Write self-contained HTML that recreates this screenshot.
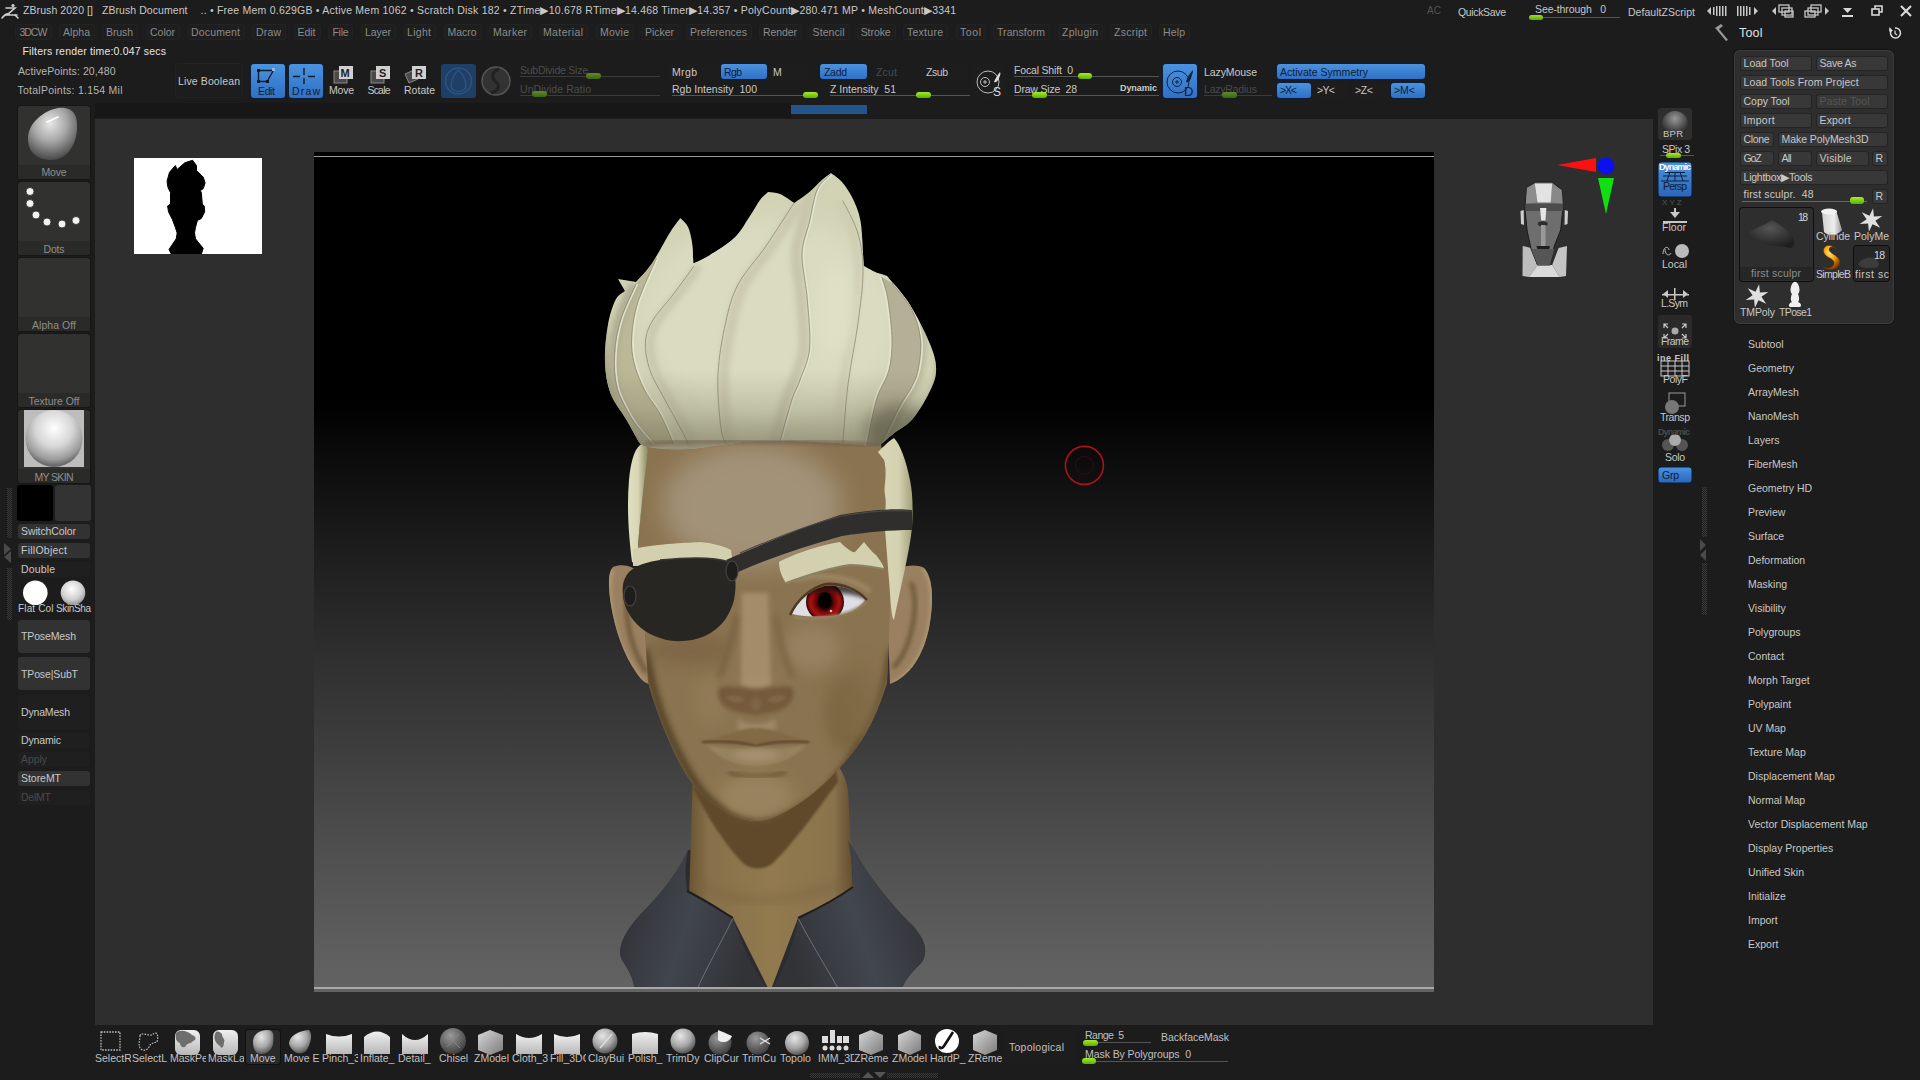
<!DOCTYPE html>
<html><head><meta charset="utf-8">
<style>
*{margin:0;padding:0;box-sizing:border-box}
html,body{width:1920px;height:1080px;overflow:hidden;background:#1c1c1c;font-family:"Liberation Sans",sans-serif;color:#c8c8c8;font-size:11px}
.a{position:absolute}
.t{position:absolute;white-space:nowrap;line-height:1}
</style></head><body>
<svg class="a" style="left:1px;top:2px" width="19" height="18" viewBox="0 0 19 18"><g fill="none" stroke="#d0d0d0" stroke-width="1.6" stroke-linecap="round"><circle cx="12" cy="3.5" r="1.6" fill="#d0d0d0" stroke="none"/><path d="M5 6 L14 6 L6 13 L16 13"/><path d="M1 16 Q5 11 8 12"/><path d="M14 13 L17 16"/></g></svg>
<div class="t" style="left:23px;top:4.91px;font-size:10.5px;color:#c8c8c8;letter-spacing:0.087px;">ZBrush 2020 []</div>
<div class="t" style="left:102px;top:4.91px;font-size:10.5px;color:#c8c8c8;letter-spacing:0.062px;">ZBrush Document</div>
<div class="t" style="left:200.5px;top:4.91px;font-size:10.5px;color:#c8c8c8;letter-spacing:0.222px;">.. • Free Mem 0.629GB • Active Mem 1062 • Scratch Disk 182 •  ZTime▶10.678 RTime▶14.468 Timer▶14.357 • PolyCount▶280.471 MP  • MeshCount▶3341</div>
<div class="t" style="left:1427px;top:5.54px;font-size:10px;color:#555;">AC</div>
<div class="t" style="left:1458px;top:6.61px;font-size:10.5px;color:#c8c8c8;letter-spacing:-0.348px;">QuickSave</div>
<div class="t" style="left:1535px;top:4.11px;font-size:10.5px;color:#c8c8c8;letter-spacing:-0.099px;">See-through&nbsp;&nbsp;&nbsp;0</div>
<div class="a" style="left:1540px;top:17px;width:80px;height:1px;background:#555;"></div>
<div class="a" style="left:1529px;top:15px;width:14px;height:5px;background:linear-gradient(#9be22a,#5aa800);border-radius:3px"></div>
<div class="t" style="left:1628px;top:6.61px;font-size:10.5px;color:#c8c8c8;letter-spacing:0.036px;">DefaultZScript</div>
<svg class="a" style="left:1705px;top:3px" width="215" height="16" viewBox="0 0 215 16"><g fill="#c8c8c8">
<path d="M2 8 L6 4 L6 12Z"/><rect x="8" y="4" width="1.5" height="8"/><rect x="11" y="3" width="1.5" height="10"/><rect x="14" y="3" width="1.5" height="10"/><rect x="17" y="3" width="1.5" height="10"/><rect x="20" y="3" width="1.5" height="10"/>
<rect x="32" y="3" width="1.5" height="10"/><rect x="35" y="3" width="1.5" height="10"/><rect x="38" y="3" width="1.5" height="10"/><rect x="41" y="3" width="1.5" height="10"/><rect x="44" y="4" width="1.5" height="8"/><path d="M53 8 L49 4 L49 12Z"/>
<path d="M67 8 L71 4 L71 12Z"/></g><g fill="none" stroke="#c8c8c8" stroke-width="1.3"><rect x="74" y="2" width="10" height="7"/><rect x="77" y="5" width="10" height="7"/><rect x="80" y="8" width="8" height="6"/>
<rect x="100" y="8" width="10" height="6"/><rect x="103" y="5" width="10" height="7"/><rect x="106" y="2" width="10" height="7"/></g><path d="M120 4 L124 8 L120 12Z" fill="#c8c8c8"/>
<g fill="#d8d8d8"><path d="M138 5 L147 5 L142.5 10Z"/><rect x="137" y="12" width="11" height="2"/></g>
<g fill="none" stroke="#d8d8d8" stroke-width="1.6"><rect x="167" y="6" width="7" height="6"/><path d="M170 6 V3 H177 V9 H174"/><path d="M196 3 L206 13 M206 3 L196 13" stroke-width="2.2"/></g>
</svg>
<div class="a" style="left:15px;top:24px;width:37px;height:16px;background:#1e1e1e;border-radius:3px;box-shadow:inset 0 0 0 1px #232323"></div>
<div class="t" style="left:19.4px;top:27.01px;font-size:10.5px;color:#8c8c8c;letter-spacing:-0.974px;">3DCW</div>
<div class="a" style="left:59px;top:24px;width:36px;height:16px;background:#1e1e1e;border-radius:3px;box-shadow:inset 0 0 0 1px #232323"></div>
<div class="t" style="left:63px;top:27.01px;font-size:10.5px;color:#8c8c8c;letter-spacing:0.035px;">Alpha</div>
<div class="a" style="left:102px;top:24px;width:36px;height:16px;background:#1e1e1e;border-radius:3px;box-shadow:inset 0 0 0 1px #232323"></div>
<div class="t" style="left:106px;top:27.01px;font-size:10.5px;color:#8c8c8c;letter-spacing:-0.109px;">Brush</div>
<div class="a" style="left:146px;top:24px;width:34px;height:16px;background:#1e1e1e;border-radius:3px;box-shadow:inset 0 0 0 1px #232323"></div>
<div class="t" style="left:150px;top:27.01px;font-size:10.5px;color:#8c8c8c;letter-spacing:-0.023px;">Color</div>
<div class="a" style="left:187px;top:24px;width:58px;height:16px;background:#1e1e1e;border-radius:3px;box-shadow:inset 0 0 0 1px #232323"></div>
<div class="t" style="left:191px;top:27.01px;font-size:10.5px;color:#8c8c8c;letter-spacing:0.163px;">Document</div>
<div class="a" style="left:252px;top:24px;width:34px;height:16px;background:#1e1e1e;border-radius:3px;box-shadow:inset 0 0 0 1px #232323"></div>
<div class="t" style="left:256px;top:27.01px;font-size:10.5px;color:#8c8c8c;letter-spacing:0.161px;">Draw</div>
<div class="a" style="left:294px;top:24px;width:27px;height:16px;background:#1e1e1e;border-radius:3px;box-shadow:inset 0 0 0 1px #232323"></div>
<div class="t" style="left:297.5px;top:27.01px;font-size:10.5px;color:#8c8c8c;letter-spacing:-0.031px;">Edit</div>
<div class="a" style="left:328px;top:24px;width:25px;height:16px;background:#1e1e1e;border-radius:3px;box-shadow:inset 0 0 0 1px #232323"></div>
<div class="t" style="left:332.5px;top:27.01px;font-size:10.5px;color:#8c8c8c;letter-spacing:-0.307px;">File</div>
<div class="a" style="left:361px;top:24px;width:35px;height:16px;background:#1e1e1e;border-radius:3px;box-shadow:inset 0 0 0 1px #232323"></div>
<div class="t" style="left:365px;top:27.01px;font-size:10.5px;color:#8c8c8c;letter-spacing:-0.066px;">Layer</div>
<div class="a" style="left:403px;top:24px;width:33px;height:16px;background:#1e1e1e;border-radius:3px;box-shadow:inset 0 0 0 1px #232323"></div>
<div class="t" style="left:407px;top:27.01px;font-size:10.5px;color:#8c8c8c;letter-spacing:0.305px;">Light</div>
<div class="a" style="left:444px;top:24px;width:38px;height:16px;background:#1e1e1e;border-radius:3px;box-shadow:inset 0 0 0 1px #232323"></div>
<div class="t" style="left:447.5px;top:27.01px;font-size:10.5px;color:#8c8c8c;letter-spacing:-0.047px;">Macro</div>
<div class="a" style="left:489px;top:24px;width:43px;height:16px;background:#1e1e1e;border-radius:3px;box-shadow:inset 0 0 0 1px #232323"></div>
<div class="t" style="left:493px;top:27.01px;font-size:10.5px;color:#8c8c8c;letter-spacing:0.266px;">Marker</div>
<div class="a" style="left:539px;top:24px;width:49px;height:16px;background:#1e1e1e;border-radius:3px;box-shadow:inset 0 0 0 1px #232323"></div>
<div class="t" style="left:543px;top:27.01px;font-size:10.5px;color:#8c8c8c;letter-spacing:0.377px;">Material</div>
<div class="a" style="left:596px;top:24px;width:38px;height:16px;background:#1e1e1e;border-radius:3px;box-shadow:inset 0 0 0 1px #232323"></div>
<div class="t" style="left:600px;top:27.01px;font-size:10.5px;color:#8c8c8c;letter-spacing:0.246px;">Movie</div>
<div class="a" style="left:641px;top:24px;width:38px;height:16px;background:#1e1e1e;border-radius:3px;box-shadow:inset 0 0 0 1px #232323"></div>
<div class="t" style="left:645px;top:27.01px;font-size:10.5px;color:#8c8c8c;letter-spacing:-0.037px;">Picker</div>
<div class="a" style="left:686px;top:24px;width:66px;height:16px;background:#1e1e1e;border-radius:3px;box-shadow:inset 0 0 0 1px #232323"></div>
<div class="t" style="left:690px;top:27.01px;font-size:10.5px;color:#8c8c8c;letter-spacing:0.037px;">Preferences</div>
<div class="a" style="left:759px;top:24px;width:43px;height:16px;background:#1e1e1e;border-radius:3px;box-shadow:inset 0 0 0 1px #232323"></div>
<div class="t" style="left:763px;top:27.01px;font-size:10.5px;color:#8c8c8c;letter-spacing:-0.091px;">Render</div>
<div class="a" style="left:809px;top:24px;width:41px;height:16px;background:#1e1e1e;border-radius:3px;box-shadow:inset 0 0 0 1px #232323"></div>
<div class="t" style="left:812.6px;top:27.01px;font-size:10.5px;color:#8c8c8c;letter-spacing:0.081px;">Stencil</div>
<div class="a" style="left:857px;top:24px;width:39px;height:16px;background:#1e1e1e;border-radius:3px;box-shadow:inset 0 0 0 1px #232323"></div>
<div class="t" style="left:860.7px;top:27.01px;font-size:10.5px;color:#8c8c8c;letter-spacing:-0.072px;">Stroke</div>
<div class="a" style="left:903px;top:24px;width:45px;height:16px;background:#1e1e1e;border-radius:3px;box-shadow:inset 0 0 0 1px #232323"></div>
<div class="t" style="left:907px;top:27.01px;font-size:10.5px;color:#8c8c8c;letter-spacing:0.260px;">Texture</div>
<div class="a" style="left:956px;top:24px;width:30px;height:16px;background:#1e1e1e;border-radius:3px;box-shadow:inset 0 0 0 1px #232323"></div>
<div class="t" style="left:960px;top:27.01px;font-size:10.5px;color:#8c8c8c;letter-spacing:0.578px;">Tool</div>
<div class="a" style="left:993px;top:24px;width:57px;height:16px;background:#1e1e1e;border-radius:3px;box-shadow:inset 0 0 0 1px #232323"></div>
<div class="t" style="left:997px;top:27.01px;font-size:10.5px;color:#8c8c8c;letter-spacing:0.068px;">Transform</div>
<div class="a" style="left:1058px;top:24px;width:45px;height:16px;background:#1e1e1e;border-radius:3px;box-shadow:inset 0 0 0 1px #232323"></div>
<div class="t" style="left:1062px;top:27.01px;font-size:10.5px;color:#8c8c8c;letter-spacing:0.258px;">Zplugin</div>
<div class="a" style="left:1110px;top:24px;width:42px;height:16px;background:#1e1e1e;border-radius:3px;box-shadow:inset 0 0 0 1px #232323"></div>
<div class="t" style="left:1114px;top:27.01px;font-size:10.5px;color:#8c8c8c;letter-spacing:0.250px;">Zscript</div>
<div class="a" style="left:1159px;top:24px;width:31px;height:16px;background:#1e1e1e;border-radius:3px;box-shadow:inset 0 0 0 1px #232323"></div>
<div class="t" style="left:1163px;top:27.01px;font-size:10.5px;color:#8c8c8c;letter-spacing:0.130px;">Help</div>
<div class="t" style="left:22.5px;top:46.11px;font-size:10.5px;color:#e6e6e6;letter-spacing:0.179px;">Filters render time:0.047 secs</div>
<div class="t" style="left:18px;top:66.11px;font-size:10.5px;color:#b4b4b4;letter-spacing:0.093px;">ActivePoints: 20,480</div>
<div class="t" style="left:17.5px;top:85.11px;font-size:10.5px;color:#b4b4b4;letter-spacing:0.247px;">TotalPoints: 1.154 Mil</div>
<div class="a" style="left:175px;top:63px;width:68px;height:35px;background:#1d1d1d;border-radius:4px;box-shadow:inset 0 0 0 1px #222"></div>
<div class="t" style="left:178px;top:76.11px;font-size:10.5px;color:#c8c8c8;letter-spacing:0.116px;">Live Boolean</div>
<div class="a" style="left:251px;top:64px;width:34px;height:34px;background:linear-gradient(#4a93e0,#2f70c4);border-radius:3px;box-shadow:0 0 0 1px #0b1d3a;"></div>
<div class="a" style="left:289px;top:64px;width:34px;height:34px;background:linear-gradient(#4a93e0,#2f70c4);border-radius:3px;box-shadow:0 0 0 1px #0b1d3a;"></div>
<svg class="a" style="left:251px;top:64px" width="72" height="34" viewBox="0 0 72 34"><g fill="#111a2a"><rect x="6" y="5" width="3" height="3"/><rect x="6" y="16" width="3" height="3"/><rect x="15" y="16" width="3" height="3"/><rect x="21" y="4" width="3" height="3" fill="#8cb8ea"/></g><g stroke="#111a2a" stroke-width="1.4" fill="none"><path d="M9 6.5 H21 M7.5 8 V16 M9 17.5 H15 M17 16 L22 7"/>
<path d="M53 4 V11 M53 14 V20 M42 12.5 H49 M57 12.5 H64"/></g></svg>
<div class="t" style="left:258px;top:86.11px;font-size:10.5px;color:#0f1c33;letter-spacing:-0.365px;">Edit</div>
<div class="t" style="left:292px;top:86.11px;font-size:10.5px;color:#0f1c33;letter-spacing:1.161px;">Draw</div>
<svg class="a" style="left:326px;top:65px" width="115" height="20" viewBox="0 0 115 20"><g>
<rect x="8" y="6" width="13" height="12" fill="#4a4a4a" stroke="#888" stroke-width="1"/><rect x="13" y="1" width="14" height="13" fill="#d0d0d0"/><text x="14.5" y="12" font-family="Liberation Sans" font-weight="bold" font-size="11" fill="#222">M</text>
<rect x="45" y="6" width="13" height="12" fill="#4a4a4a" stroke="#888" stroke-width="1"/><rect x="50" y="1" width="14" height="13" fill="#d0d0d0"/><text x="53" y="12" font-family="Liberation Sans" font-weight="bold" font-size="11" fill="#222">S</text>
<path d="M79 9 L88 5 L92 14 L83 18Z" fill="#4a4a4a" stroke="#888" stroke-width="1"/><rect x="86" y="1" width="14" height="13" fill="#d0d0d0"/><text x="89" y="12" font-family="Liberation Sans" font-weight="bold" font-size="11" fill="#222">R</text>
</g></svg>
<div class="t" style="left:329px;top:85.11px;font-size:10.5px;color:#c8c8c8;letter-spacing:-0.229px;">Move</div>
<div class="t" style="left:367.5px;top:85.11px;font-size:10.5px;color:#c8c8c8;letter-spacing:-0.816px;">Scale</div>
<div class="t" style="left:404px;top:85.11px;font-size:10.5px;color:#c8c8c8;letter-spacing:0.013px;">Rotate</div>
<div class="a" style="left:441px;top:64px;width:35px;height:34px;background:#1f3f66;border-radius:3px"></div>
<svg class="a" style="left:441px;top:64px" width="75" height="34" viewBox="0 0 75 34"><g fill="none" stroke="#2c5383" stroke-width="1.5"><circle cx="17.5" cy="17" r="13"/><path d="M17.5 6 C24 12 26 20 24 25 C20 28 15 28 11 25 C9 20 11 12 17.5 6Z"/></g>
<circle cx="55" cy="17" r="14" fill="#333" stroke="#555" stroke-width="1.5"/><path d="M58 5 C48 9 52 16 56 19 C60 23 55 28 50 29" fill="none" stroke="#222" stroke-width="3"/></svg>
<div class="t" style="left:520px;top:65.11px;font-size:10.5px;color:#4c4c4c;letter-spacing:-0.246px;">SubDivide Size</div>
<div class="a" style="left:520px;top:76px;width:140px;height:1px;background:#3a3a3a;"></div>
<div class="a" style="left:586px;top:73px;width:15px;height:6px;background:linear-gradient(#5f8c2a,#3d6412);border-radius:3px"></div>
<div class="t" style="left:520px;top:84.11px;font-size:10.5px;color:#4c4c4c;letter-spacing:0.075px;">UnDivide Ratio</div>
<div class="a" style="left:520px;top:95px;width:140px;height:1px;background:#3a3a3a;"></div>
<div class="a" style="left:532px;top:91px;width:15px;height:6px;background:linear-gradient(#5f8c2a,#3d6412);border-radius:3px"></div>
<div class="a" style="left:668px;top:64px;width:52px;height:16px;background:#1d1d1d;border-radius:3px"></div>
<div class="t" style="left:672px;top:66.61px;font-size:10.5px;color:#c8c8c8;letter-spacing:0.354px;">Mrgb</div>
<div class="a" style="left:721px;top:64px;width:46px;height:15px;background:linear-gradient(#4a93e0,#2f70c4);border-radius:3px;box-shadow:0 0 0 1px #0b1d3a;"></div>
<div class="t" style="left:724px;top:66.61px;font-size:10.5px;color:#0f1c33;letter-spacing:-0.633px;">Rgb</div>
<div class="a" style="left:769px;top:64px;width:41px;height:16px;background:#1d1d1d;border-radius:3px"></div>
<div class="t" style="left:773px;top:66.61px;font-size:10.5px;color:#c8c8c8;">M</div>
<div class="t" style="left:672px;top:84.11px;font-size:10.5px;color:#c8c8c8;letter-spacing:0.021px;">Rgb Intensity&nbsp;&nbsp;100</div>
<div class="a" style="left:672px;top:95px;width:146px;height:1px;background:#555;"></div>
<div class="a" style="left:803px;top:92px;width:15px;height:6px;background:linear-gradient(#a4ec2e,#5cae00);border-radius:3px"></div>
<div class="a" style="left:820px;top:64px;width:47px;height:15px;background:linear-gradient(#4a93e0,#2f70c4);border-radius:3px;box-shadow:0 0 0 1px #0b1d3a;"></div>
<div class="t" style="left:824px;top:66.61px;font-size:10.5px;color:#0f1c33;letter-spacing:-0.312px;">Zadd</div>
<div class="t" style="left:876px;top:66.61px;font-size:10.5px;color:#4a4a4a;letter-spacing:0.193px;">Zcut</div>
<div class="a" style="left:920px;top:64px;width:48px;height:16px;background:#1d1d1d;border-radius:3px"></div>
<div class="t" style="left:926px;top:66.61px;font-size:10.5px;color:#c8c8c8;letter-spacing:-0.448px;">Zsub</div>
<div class="t" style="left:830px;top:84.11px;font-size:10.5px;color:#c8c8c8;letter-spacing:0.003px;">Z Intensity&nbsp;&nbsp;51</div>
<div class="a" style="left:830px;top:95px;width:140px;height:1px;background:#555;"></div>
<div class="a" style="left:916px;top:92px;width:15px;height:6px;background:linear-gradient(#a4ec2e,#5cae00);border-radius:3px"></div>
<div class="a" style="left:973px;top:64px;width:33px;height:34px;background:#1d1d1d;border-radius:4px"></div>
<svg class="a" style="left:973px;top:64px" width="34" height="34" viewBox="0 0 34 34"><g fill="none" stroke="#bbb" stroke-width="1"><circle cx="15" cy="18" r="11"/><circle cx="12" cy="18" r="4.5"/><path d="M12 16 V20 M10 18 H14"/></g><path d="M27 8 C24 12 22 15 21 18 C23 19 25 17 26 14 C27 12 28 10 27 8Z" fill="#ddd"/><text x="20" y="32" font-family="Liberation Sans" font-size="12" fill="#ddd">S</text></svg>
<div class="t" style="left:1014px;top:65.11px;font-size:10.5px;color:#c8c8c8;letter-spacing:-0.175px;">Focal Shift&nbsp;&nbsp;0</div>
<div class="a" style="left:1014px;top:76px;width:145px;height:1px;background:#555;"></div>
<div class="a" style="left:1078px;top:73px;width:14px;height:6px;background:linear-gradient(#a4ec2e,#5cae00);border-radius:3px"></div>
<div class="t" style="left:1014px;top:84.11px;font-size:10.5px;color:#c8c8c8;letter-spacing:-0.197px;">Draw Size&nbsp;&nbsp;28</div>
<div class="a" style="left:1014px;top:95px;width:145px;height:1px;background:#555;"></div>
<div class="a" style="left:1032px;top:92px;width:15px;height:6px;background:linear-gradient(#a4ec2e,#5cae00);border-radius:3px"></div>
<div class="t" style="left:1120px;top:84.38px;font-size:9px;color:#c8c8c8;letter-spacing:-0.089px;font-weight:bold;">Dynamic</div>
<div class="a" style="left:1163px;top:64px;width:34px;height:34px;background:linear-gradient(#4a93e0,#2f70c4);border-radius:3px;box-shadow:0 0 0 1px #0b1d3a;"></div>
<svg class="a" style="left:1163px;top:64px" width="34" height="34" viewBox="0 0 34 34"><g fill="none" stroke="#102040" stroke-width="1"><circle cx="15" cy="18" r="11"/><circle cx="14" cy="18" r="4.5"/><path d="M14 16 V20 M12 18 H16"/></g><path d="M30 6 C26 10 24 14 23 18 C25 19 27 17 28 14 C29 11 30 9 30 6Z" fill="#102040"/><text x="21" y="32" font-family="Liberation Sans" font-size="13" fill="#102040">D</text></svg>
<div class="t" style="left:1204px;top:66.61px;font-size:10.5px;color:#c8c8c8;letter-spacing:-0.088px;">LazyMouse</div>
<div class="t" style="left:1204px;top:84.11px;font-size:10.5px;color:#4a4a4a;letter-spacing:-0.208px;">LazyRadius</div>
<div class="a" style="left:1204px;top:95px;width:68px;height:1px;background:#3a3a3a;"></div>
<div class="a" style="left:1222px;top:92px;width:15px;height:6px;background:linear-gradient(#5f8c2a,#3d6412);border-radius:3px"></div>
<div class="a" style="left:1277px;top:64px;width:148px;height:15px;background:linear-gradient(#4a93e0,#2f70c4);border-radius:3px;box-shadow:0 0 0 1px #0b1d3a;"></div>
<div class="t" style="left:1280px;top:66.61px;font-size:10.5px;color:#0f1c33;letter-spacing:0.029px;">Activate Symmetry</div>
<div class="a" style="left:1277px;top:83px;width:34px;height:15px;background:linear-gradient(#4a93e0,#2f70c4);border-radius:3px;box-shadow:0 0 0 1px #0b1d3a;"></div>
<div class="t" style="left:1280px;top:85.11px;font-size:10.5px;color:#0f1c33;letter-spacing:-1.141px;">&gt;X&lt;</div>
<div class="a" style="left:1315px;top:83px;width:34px;height:15px;background:#1d1d1d;border-radius:3px"></div>
<div class="t" style="left:1317px;top:85.11px;font-size:10.5px;color:#c8c8c8;letter-spacing:-0.641px;">&gt;Y&lt;</div>
<div class="a" style="left:1352px;top:83px;width:34px;height:15px;background:#1d1d1d;border-radius:3px"></div>
<div class="t" style="left:1355px;top:85.11px;font-size:10.5px;color:#c8c8c8;letter-spacing:-0.344px;">&gt;Z&lt;</div>
<div class="a" style="left:1391px;top:83px;width:34px;height:15px;background:linear-gradient(#4a93e0,#2f70c4);border-radius:3px;box-shadow:0 0 0 1px #0b1d3a;"></div>
<div class="t" style="left:1394px;top:85.11px;font-size:10.5px;color:#0f1c33;letter-spacing:-0.008px;">&gt;M&lt;</div>
<div class="a" style="left:95px;top:103px;width:696px;height:15px;background:#171717;"></div>
<div class="a" style="left:791px;top:105px;width:76px;height:9px;background:#24548c;"></div>
<div class="a" style="left:95px;top:119px;width:1558px;height:906px;background:#2e2e2e;"></div>
<div class="a" style="left:314px;top:152px;width:1120px;height:840px;background:linear-gradient(to bottom,#000 0px,#000 252px,#0a0a0a 298px,#1d1d1d 398px,#2e2e2e 498px,#3e3e3e 598px,#4f4f4f 698px,#5e5e5e 798px,#636363 840px);"></div>
<div class="a" style="left:314px;top:156px;width:1120px;height:1px;background:#9a9a9a;"></div>
<div class="a" style="left:314px;top:987px;width:1120px;height:2px;background:#a8a8a8;"></div>
<div class="a" style="left:18px;top:105.5px;width:72px;height:73px;background:#31312f;border-radius:3px;box-shadow:0 0 0 1px #161616"></div>
<div class="a" style="left:18px;top:164.5px;width:72px;height:14px;background:#2a2a29;border-radius:0 0 3px 3px"></div>
<div class="t" style="left:41.5px;top:167.11px;font-size:10.5px;color:#8e8e8e;letter-spacing:-0.229px;">Move</div>
<svg class="a" style="left:18px;top:105px" width="72" height="58" viewBox="0 0 72 58"><defs><radialGradient id="mvg" cx="0.45" cy="0.3" r="0.75"><stop offset="0" stop-color="#e8e8e8"/><stop offset="0.45" stop-color="#a8a8a8"/><stop offset="1" stop-color="#3c3c3c"/></radialGradient></defs>
<path d="M10 34 C10 18 25 6 40 3 C55 1 60 10 59 24 C58 42 48 55 33 55 C18 55 10 46 10 34Z" fill="url(#mvg)"/><path d="M29 17 L40 12" stroke="#fff" stroke-width="1.6" stroke-linecap="round"/></svg>
<div class="a" style="left:18px;top:182px;width:72px;height:73px;background:#31312f;border-radius:3px;box-shadow:0 0 0 1px #161616"></div>
<div class="a" style="left:18px;top:241px;width:72px;height:14px;background:#2a2a29;border-radius:0 0 3px 3px"></div>
<div class="t" style="left:43.5px;top:243.61px;font-size:10.5px;color:#8e8e8e;letter-spacing:-0.198px;">Dots</div>
<svg class="a" style="left:18px;top:182px" width="72" height="58" viewBox="0 0 72 58"><g fill="#f2f2f2" stroke="#222" stroke-width="0.8">
<circle cx="12" cy="9.5" r="4"/><circle cx="12" cy="21.5" r="4"/><circle cx="18" cy="33" r="4"/><circle cx="29" cy="40" r="4"/><circle cx="44" cy="42" r="4"/><circle cx="58" cy="38.5" r="4"/></g></svg>
<div class="a" style="left:18px;top:258px;width:72px;height:73px;background:#31312f;border-radius:3px;box-shadow:0 0 0 1px #161616"></div>
<div class="a" style="left:18px;top:317px;width:72px;height:14px;background:#2a2a29;border-radius:0 0 3px 3px"></div>
<div class="t" style="left:32.0px;top:319.61px;font-size:10.5px;color:#8e8e8e;letter-spacing:0.051px;">Alpha Off</div>
<div class="a" style="left:18px;top:334px;width:72px;height:73px;background:#31312f;border-radius:3px;box-shadow:0 0 0 1px #161616"></div>
<div class="a" style="left:18px;top:393px;width:72px;height:14px;background:#2a2a29;border-radius:0 0 3px 3px"></div>
<div class="t" style="left:28.5px;top:395.61px;font-size:10.5px;color:#8e8e8e;letter-spacing:-0.017px;">Texture Off</div>
<div class="a" style="left:18px;top:410px;width:72px;height:73px;background:#31312f;border-radius:3px;box-shadow:0 0 0 1px #161616"></div>
<div class="a" style="left:18px;top:469px;width:72px;height:14px;background:#2a2a29;border-radius:0 0 3px 3px"></div>
<div class="t" style="left:34.5px;top:471.61px;font-size:10.5px;color:#8e8e8e;letter-spacing:-0.664px;">MY SKIN</div>
<svg class="a" style="left:24px;top:410px" width="60" height="57" viewBox="0 0 60 57"><defs><radialGradient id="skg" cx="0.5" cy="0.32" r="0.65"><stop offset="0" stop-color="#ffffff"/><stop offset="0.5" stop-color="#d6d6d6"/><stop offset="0.85" stop-color="#9a9a9a"/><stop offset="1" stop-color="#6a6a6a"/></radialGradient></defs><rect width="60" height="57" fill="#bdbdbd"/><circle cx="30" cy="28.5" r="28.5" fill="url(#skg)"/></svg>
<div class="a" style="left:17px;top:485px;width:36px;height:36px;background:#000;border-radius:3px"></div>
<div class="a" style="left:55px;top:485px;width:36px;height:36px;background:#333;border-radius:3px"></div>
<div class="a" style="left:18px;top:524px;width:72px;height:15px;background:#323232;border-radius:3px"></div>
<div class="t" style="left:21px;top:526.11px;font-size:10.5px;color:#c8c8c8;letter-spacing:-0.103px;">SwitchColor</div>
<div class="a" style="left:18px;top:543px;width:72px;height:15px;background:#323232;border-radius:3px"></div>
<div class="t" style="left:21px;top:545.11px;font-size:10.5px;color:#c8c8c8;letter-spacing:0.248px;">FillObject</div>
<div class="a" style="left:18px;top:562px;width:72px;height:15px;background:#1f1f1f;border-radius:3px"></div>
<div class="t" style="left:21px;top:564.11px;font-size:10.5px;color:#c8c8c8;letter-spacing:0.144px;">Double</div>
<svg class="a" style="left:18px;top:578px" width="72" height="30" viewBox="0 0 72 30"><defs><radialGradient id="ss" cx="0.45" cy="0.35" r="0.7"><stop offset="0" stop-color="#fff"/><stop offset="0.6" stop-color="#d0d0d0"/><stop offset="1" stop-color="#8a8a8a"/></radialGradient></defs><circle cx="17.3" cy="14.8" r="12.3" fill="#fff"/><circle cx="55" cy="14.8" r="12.3" fill="url(#ss)"/></svg>
<div class="t" style="left:18px;top:603.83px;font-size:10px;color:#c8c8c8;letter-spacing:0.150px;">Flat Col</div>
<div class="t" style="left:56px;top:603.83px;font-size:10px;color:#c8c8c8;letter-spacing:-0.375px;">SkinSha</div>
<div class="a" style="left:18px;top:620px;width:72px;height:33px;background:#323232;border-radius:3px"></div>
<div class="t" style="left:21px;top:631.11px;font-size:10.5px;color:#c8c8c8;letter-spacing:-0.129px;">TPoseMesh</div>
<div class="a" style="left:18px;top:657px;width:72px;height:33px;background:#323232;border-radius:3px"></div>
<div class="t" style="left:21px;top:669.11px;font-size:10.5px;color:#c8c8c8;letter-spacing:-0.130px;">TPose|SubT</div>
<div class="a" style="left:18px;top:695px;width:72px;height:34px;background:#1f1f1f;border-radius:3px"></div>
<div class="t" style="left:21px;top:707.11px;font-size:10.5px;color:#c8c8c8;letter-spacing:-0.172px;">DynaMesh</div>
<div class="a" style="left:18px;top:733px;width:72px;height:15px;background:#1f1f1f;border-radius:3px"></div>
<div class="t" style="left:21px;top:735.11px;font-size:10.5px;color:#c8c8c8;letter-spacing:-0.141px;">Dynamic</div>
<div class="a" style="left:18px;top:752px;width:72px;height:15px;background:#1f1f1f;border-radius:3px"></div>
<div class="t" style="left:21px;top:754.11px;font-size:10.5px;color:#4a4a4a;letter-spacing:-0.066px;">Apply</div>
<div class="a" style="left:18px;top:771px;width:72px;height:15px;background:#323232;border-radius:3px"></div>
<div class="t" style="left:21px;top:773.11px;font-size:10.5px;color:#c8c8c8;letter-spacing:-0.044px;">StoreMT</div>
<div class="a" style="left:18px;top:790px;width:72px;height:15px;background:#1f1f1f;border-radius:3px"></div>
<div class="t" style="left:21px;top:792.11px;font-size:10.5px;color:#4a4a4a;letter-spacing:-0.230px;">DelMT</div>
<svg class="a" style="left:3px;top:486px" width="16" height="135" viewBox="0 0 16 135"><defs><pattern id="dp" width="2" height="2" patternUnits="userSpaceOnUse"><rect width="1" height="1" fill="#3a3a3a"/><rect x="1" y="1" width="1" height="1" fill="#3a3a3a"/></pattern></defs>
<rect x="4" y="2" width="5" height="50" fill="url(#dp)"/><rect x="4" y="82" width="5" height="52" fill="url(#dp)"/><path d="M1 57 L8 63 L1 69Z M8 65 L1 71 L8 77Z" fill="#4a4a4a"/></svg>
<div class="a" style="left:95px;top:119px;width:1px;height:906px;background:#2e2e2e;"></div>
<div class="a" style="left:134px;top:158px;width:128px;height:96px;background:#fff;"></div>
<svg class="a" style="left:134px;top:158px" width="128" height="96" viewBox="0 0 128 96"><path fill="#000" stroke="#000" stroke-width="1" stroke-linejoin="round" d="M33.6 27.8 L33.1 23.0 L35.5 14.3 L41.3 7.6 L43.2 11.4 L50.9 4.7 L58.6 2.3 L62.5 7.6 L62.5 12.4 L69.2 19.1 L71.1 24.9 L69.2 30.7 L66.3 32.6 L67.3 34.5 L68.3 46.1 L70.2 48.0 L70.7 53.8 L67.3 60.5 L63.4 62.5 L61.5 69.2 L60.5 75.0 L61.5 80.8 L69.2 90.4 L67.3 96.2 L37.4 96.2 L35.0 91.4 L42.2 80.8 L43.2 75.0 L41.3 69.2 L38.4 61.5 L34.5 53.8 L33.6 48.0 L36.5 46.1 L36.5 34.5 L34.5 30.7Z"/></svg>
<div class="a" style="left:1653px;top:119px;width:45px;height:906px;background:#1c1c1c;"></div>
<div class="a" style="left:1700px;top:119px;width:4px;height:906px;background:#1c1c1c;"></div>
<svg class="a" style="left:1655px;top:104px" width="42" height="385" viewBox="0 0 42 385"><defs>
<radialGradient id="bprg" cx="0.5" cy="0.3" r="0.6"><stop offset="0" stop-color="#999"/><stop offset="1" stop-color="#2a2a2a"/></radialGradient>
<linearGradient id="pbl" x1="0" y1="0" x2="0" y2="1"><stop offset="0" stop-color="#4a93e0"/><stop offset="1" stop-color="#2a66b8"/></linearGradient></defs>
<rect x="3" y="4" width="34" height="32" rx="3" fill="#2e2e2e"/><circle cx="20" cy="20" r="13" fill="url(#bprg)"/>
<rect x="3" y="58" width="34" height="35" rx="3" fill="url(#pbl)" stroke="#0b1d3a"/>
<g stroke="#0d1f3d" stroke-width="1" fill="none"><path d="M8 72 H32 M10 68.5 H30 M6 77 H34 M15 68 L12 77 M20 68 V77 M25 68 L28 77"/></g>
<rect x="3" y="211" width="34" height="33" rx="3" fill="#2a2a2a"/>
<g fill="#c8c8c8"><rect x="8" y="117" width="24" height="2"/><path d="M15 108 L25 108 L20 114Z"/><rect x="19" y="104" width="2" height="5"/></g>
<circle cx="27" cy="147" r="7" fill="#bbb"/><path d="M8 150 C8 142 14 142 14 146 M10 145 C10 152 15 152 16 149" stroke="#bbb" fill="none"/>
<g fill="#c8c8c8"><rect x="7" y="190" width="27" height="1.5"/><path d="M8 190 L13 186 L13 194Z M33 190 L28 186 L28 194Z"/><rect x="19" y="184" width="1.5" height="12"/></g>
<g stroke="#c8c8c8" stroke-width="1.2" fill="none"><path d="M9 220 L13 224 M9 224 V220 H13 M31 220 L27 224 M31 224 V220 H27 M9 234 L13 230 M9 230 V234 H13 M31 234 L27 230 M31 230 V234 H27"/></g><circle cx="20" cy="227" r="3.5" fill="#aaa"/>
<g stroke="#c8c8c8" stroke-width="1" fill="none"><rect x="6" y="257" width="28" height="15"/><path d="M6 262 H34 M6 267 H34 M13 257 V272 M20 257 V272 M27 257 V272"/></g>
<rect x="14" y="289" width="16" height="13" fill="none" stroke="#9a9a9a"/><circle cx="17" cy="303" r="7" fill="#777"/>
<circle cx="13" cy="341" r="6" fill="#555"/><circle cx="27" cy="341" r="6" fill="#555"/><circle cx="20" cy="336" r="6" fill="#aaa"/>
<rect x="3" y="363" width="34" height="16" rx="3" fill="url(#pbl)" stroke="#0b1d3a"/>
</svg>
<div class="t" style="left:1663px;top:128.96px;font-size:9.5px;color:#c8c8c8;letter-spacing:0.227px;">BPR</div>
<div class="t" style="left:1662px;top:143.51px;font-size:10.5px;color:#c8c8c8;letter-spacing:-0.472px;">SPix&nbsp;3</div>
<div class="a" style="left:1660px;top:155px;width:34px;height:1px;background:#555;"></div>
<div class="a" style="left:1666px;top:153px;width:15px;height:5px;background:linear-gradient(#a4ec2e,#5cae00);border-radius:3px"></div>
<div class="t" style="left:1659px;top:163.38px;font-size:9px;color:#fff;letter-spacing:-0.922px;font-weight:bold;">Dynamic</div>
<div class="t" style="left:1663px;top:181.11px;font-size:10.5px;color:#0f1c33;letter-spacing:-0.859px;">Persp</div>
<div class="t" style="left:1662px;top:199.23px;font-size:8px;color:#555;">X Y Z</div>
<div class="t" style="left:1662px;top:222.11px;font-size:10.5px;color:#c8c8c8;letter-spacing:0.016px;">Floor</div>
<div class="t" style="left:1662px;top:259.11px;font-size:10.5px;color:#c8c8c8;letter-spacing:-0.027px;">Local</div>
<div class="t" style="left:1661px;top:297.71px;font-size:10.5px;color:#c8c8c8;letter-spacing:-0.691px;">L.Sym</div>
<div class="t" style="left:1661px;top:336.11px;font-size:10.5px;color:#c8c8c8;letter-spacing:-0.586px;">Frame</div>
<div class="t" style="left:1657px;top:354.38px;font-size:9px;color:#c8c8c8;letter-spacing:0.498px;font-weight:bold;">ine Fill</div>
<div class="t" style="left:1663px;top:374.11px;font-size:10.5px;color:#c8c8c8;letter-spacing:-0.461px;">PolyF</div>
<div class="t" style="left:1660px;top:412.11px;font-size:10.5px;color:#c8c8c8;letter-spacing:-0.459px;">Transp</div>
<div class="t" style="left:1658px;top:428.38px;font-size:9px;color:#4a4a4a;letter-spacing:-0.922px;font-weight:bold;">Dynamic</div>
<div class="t" style="left:1665px;top:452.11px;font-size:10.5px;color:#c8c8c8;letter-spacing:-0.339px;">Solo</div>
<div class="t" style="left:1662px;top:469.61px;font-size:10.5px;color:#0f1c33;letter-spacing:-0.258px;">Grp</div>
<svg class="a" style="left:1700px;top:485px" width="8" height="130" viewBox="0 0 8 130"><rect x="2" y="2" width="5" height="50" fill="url(#dp)"/><rect x="2" y="78" width="5" height="52" fill="url(#dp)"/><path d="M0 54 L6 60 L0 66Z M6 64 L0 70 L6 76Z" fill="#4a4a4a"/></svg>
<svg class="a" style="left:1712px;top:22px" width="20" height="20" viewBox="0 0 20 20"><path d="M3 6 L9 2 L11 4 L7 7 L16 18 L14 19 L5 8 Z" fill="#999"/></svg>
<div class="t" style="left:1739px;top:27.42px;font-size:12.5px;color:#e0e0e0;letter-spacing:0.188px;">Tool</div>
<svg class="a" style="left:1888px;top:26px" width="14" height="14" viewBox="0 0 14 14"><path d="M3.5 4 A5 5 0 1 0 7 2" fill="none" stroke="#ddd" stroke-width="1.5"/><path d="M1.5 1 L5 5 L1 5.5Z" fill="#ddd"/><path d="M7 4.5 V7.5 L9 9" stroke="#ddd" stroke-width="1.2" fill="none"/></svg>
<div class="a" style="left:1734px;top:50px;width:160px;height:274px;background:#2e2e2e;border-radius:6px;box-shadow:inset 0 0 0 1px #3c3c3c,0 0 0 1px #141414"></div>
<div class="a" style="left:1740px;top:56px;width:72px;height:15px;background:#383838;border-radius:3px;box-shadow:inset 0 0 0 1px #242424"></div>
<div class="t" style="left:1743.6px;top:58.31px;font-size:10.5px;color:#c8c8c8;letter-spacing:-0.045px;">Load Tool</div>
<div class="a" style="left:1816px;top:56px;width:72px;height:15px;background:#383838;border-radius:3px;box-shadow:inset 0 0 0 1px #242424"></div>
<div class="t" style="left:1819.6px;top:58.31px;font-size:10.5px;color:#c8c8c8;letter-spacing:-0.255px;">Save As</div>
<div class="a" style="left:1740px;top:75px;width:148px;height:15px;background:#383838;border-radius:3px;box-shadow:inset 0 0 0 1px #242424"></div>
<div class="t" style="left:1743.6px;top:77.31px;font-size:10.5px;color:#c8c8c8;letter-spacing:0.063px;">Load Tools From Project</div>
<div class="a" style="left:1740px;top:94px;width:72px;height:15px;background:#383838;border-radius:3px;box-shadow:inset 0 0 0 1px #242424"></div>
<div class="t" style="left:1743.6px;top:96.31px;font-size:10.5px;color:#c8c8c8;letter-spacing:-0.064px;">Copy Tool</div>
<div class="a" style="left:1816px;top:94px;width:72px;height:15px;background:#383838;border-radius:3px;box-shadow:inset 0 0 0 1px #242424"></div>
<div class="t" style="left:1819.6px;top:96.31px;font-size:10.5px;color:#555;letter-spacing:0.128px;">Paste Tool</div>
<div class="a" style="left:1740px;top:113px;width:72px;height:15px;background:#383838;border-radius:3px;box-shadow:inset 0 0 0 1px #242424"></div>
<div class="t" style="left:1743.6px;top:115.31px;font-size:10.5px;color:#c8c8c8;letter-spacing:0.247px;">Import</div>
<div class="a" style="left:1816px;top:113px;width:72px;height:15px;background:#383838;border-radius:3px;box-shadow:inset 0 0 0 1px #242424"></div>
<div class="t" style="left:1819.6px;top:115.31px;font-size:10.5px;color:#c8c8c8;letter-spacing:0.128px;">Export</div>
<div class="a" style="left:1740px;top:132px;width:34px;height:15px;background:#383838;border-radius:3px;box-shadow:inset 0 0 0 1px #242424"></div>
<div class="t" style="left:1743.6px;top:134.31px;font-size:10.5px;color:#c8c8c8;letter-spacing:-0.359px;">Clone</div>
<div class="a" style="left:1778px;top:132px;width:110px;height:15px;background:#383838;border-radius:3px;box-shadow:inset 0 0 0 1px #242424"></div>
<div class="t" style="left:1781.6px;top:134.31px;font-size:10.5px;color:#c8c8c8;letter-spacing:-0.080px;">Make PolyMesh3D</div>
<div class="a" style="left:1740px;top:151px;width:34px;height:15px;background:#383838;border-radius:3px;box-shadow:inset 0 0 0 1px #242424"></div>
<div class="t" style="left:1743.6px;top:153.31px;font-size:10.5px;color:#c8c8c8;letter-spacing:-1.211px;">GoZ</div>
<div class="a" style="left:1778px;top:151px;width:34px;height:15px;background:#383838;border-radius:3px;box-shadow:inset 0 0 0 1px #242424"></div>
<div class="t" style="left:1781.6px;top:153.31px;font-size:10.5px;color:#c8c8c8;letter-spacing:-0.836px;">All</div>
<div class="a" style="left:1816px;top:151px;width:53px;height:15px;background:#383838;border-radius:3px;box-shadow:inset 0 0 0 1px #242424"></div>
<div class="t" style="left:1819.6px;top:153.31px;font-size:10.5px;color:#c8c8c8;letter-spacing:0.208px;">Visible</div>
<div class="a" style="left:1872px;top:151px;width:16px;height:15px;background:#383838;border-radius:3px;box-shadow:inset 0 0 0 1px #242424"></div>
<div class="t" style="left:1875.6px;top:153.31px;font-size:10.5px;color:#c8c8c8;letter-spacing:-1.594px;">R</div>
<div class="a" style="left:1740px;top:170px;width:148px;height:15px;background:#383838;border-radius:3px;box-shadow:inset 0 0 0 1px #242424"></div>
<div class="t" style="left:1743.6px;top:172.31px;font-size:10.5px;color:#c8c8c8;letter-spacing:-0.248px;">Lightbox▶Tools</div>
<div class="t" style="left:1743.6px;top:188.71px;font-size:10.5px;color:#c8c8c8;letter-spacing:0.144px;">first sculpr.&nbsp;&nbsp;48</div>
<div class="a" style="left:1742px;top:201px;width:125px;height:1px;background:#666;"></div>
<div class="a" style="left:1850px;top:197px;width:14px;height:7px;background:linear-gradient(#a4ec2e,#5cae00);border-radius:3px"></div>
<div class="a" style="left:1872px;top:189px;width:16px;height:15px;background:#383838;border-radius:3px;box-shadow:inset 0 0 0 1px #242424"></div>
<div class="t" style="left:1875.6px;top:191.31px;font-size:10.5px;color:#c8c8c8;letter-spacing:-1.594px;">R</div>
<div class="a" style="left:1739.5px;top:207.5px;width:73px;height:73px;background:#2e2e2e;border-radius:3px;box-shadow:0 0 0 1px #0e0e0e"></div>
<div class="a" style="left:1740px;top:267px;width:72px;height:13px;background:#262626;"></div>
<svg class="a" style="left:1740px;top:208px" width="150" height="110" viewBox="0 0 150 110">
<defs><radialGradient id="hatg" cx="0.5" cy="0.3" r="0.7"><stop offset="0" stop-color="#555"/><stop offset="1" stop-color="#1e1e1e"/></radialGradient>
<linearGradient id="cyl" x1="0" y1="0" x2="1" y2="0"><stop offset="0" stop-color="#cfcfcf"/><stop offset="0.6" stop-color="#eee"/><stop offset="1" stop-color="#999"/></linearGradient>
<radialGradient id="gold" cx="0.4" cy="0.3" r="0.7"><stop offset="0" stop-color="#ffe36a"/><stop offset="0.5" stop-color="#f0a010"/><stop offset="1" stop-color="#8a3c00"/></radialGradient></defs>
<path d="M6 26 C14 20 24 18 32 12 C38 16 46 20 52 28 C55 34 55 40 50 40 C40 36 30 40 22 34 C16 32 8 32 6 26Z" fill="url(#hatg)"/>
<path d="M82 4 L96 2 L102 22 C97 28 88 28 84 24Z" fill="url(#cyl)"/><ellipse cx="89" cy="3.5" rx="8" ry="3" fill="#f2f2f2"/>
<path d="M133.1 0.2 L133.9 8.6 L142.3 7.9 L135.4 12.8 L140.2 19.7 L132.5 16.2 L128.9 23.8 L128.1 15.4 L119.7 16.1 L126.6 11.2 L121.8 4.3 L129.5 7.8Z" fill="#e0e0e0"/>
<path d="M92 38 C86 36 82 40 84 45 C86 50 94 50 94 55 C94 60 86 62 83 58 C86 64 100 62 100 54 C100 48 90 46 89 42 C89 38 94 38 96 41Z" fill="url(#gold)" stroke="#6a3000" stroke-width="0.5"/>
<path d="M19.1 76.2 L19.9 84.6 L28.3 83.9 L21.4 88.8 L26.2 95.7 L18.5 92.2 L14.9 99.8 L14.1 91.4 L5.7 92.1 L12.6 87.2 L7.8 80.3 L15.5 83.8Z" fill="#e0e0e0"/><path d="M120 50 C126 44 134 44 140 48 C144 52 142 58 136 58 C130 56 124 58 120 50Z" fill="#3a3a3a"/>
<path d="M52 76 C50 80 50 84 52 86 C51 88 50 92 52 94 C49 95 48 98 50 99 L60 99 C62 98 61 95 58 94 C60 92 59 88 58 86 C60 84 60 80 58 76 C56 73 54 73 52 76Z" fill="#f0f0f0"/>
</svg>
<div class="t" style="left:1798px;top:212.11px;font-size:10.5px;color:#d8d8d8;letter-spacing:-1.688px;">18</div>
<div class="t" style="left:1751px;top:268.11px;font-size:10.5px;color:#8e8e8e;letter-spacing:0.196px;">first sculpr</div>
<div class="t" style="left:1816px;top:230.91px;font-size:10.5px;color:#c8c8c8;letter-spacing:-0.172px;">Cylinde</div>
<div class="t" style="left:1854px;top:230.91px;font-size:10.5px;color:#c8c8c8;letter-spacing:-0.003px;">PolyMe</div>
<div class="a" style="left:1854px;top:245.5px;width:35px;height:35px;background:#262626;border-radius:3px;box-shadow:0 0 0 1px #0e0e0e"></div>
<svg class="a" style="left:1856px;top:250px" width="30" height="25" viewBox="0 0 30 25"><path d="M2 14 C6 8 14 6 20 9 C24 12 24 18 18 18 C12 17 6 20 2 14Z" fill="#3c3c3c"/></svg>
<div class="t" style="left:1874px;top:250.11px;font-size:10.5px;color:#d8d8d8;letter-spacing:-0.688px;">18</div>
<div class="t" style="left:1816px;top:269.11px;font-size:10.5px;color:#c8c8c8;letter-spacing:-0.685px;">SimpleB</div>
<div class="t" style="left:1855px;top:269.11px;font-size:10.5px;color:#c8c8c8;letter-spacing:0.522px;width:34px;overflow:hidden">first sc</div>
<div class="t" style="left:1740px;top:307.11px;font-size:10.5px;color:#c8c8c8;letter-spacing:-0.119px;">TMPoly</div>
<div class="t" style="left:1779px;top:307.11px;font-size:10.5px;color:#c8c8c8;letter-spacing:-0.637px;">TPose1</div>
<div class="t" style="left:1748px;top:338.61px;font-size:10.5px;color:#c8c8c8;">Subtool</div>
<div class="t" style="left:1748px;top:362.61px;font-size:10.5px;color:#c8c8c8;">Geometry</div>
<div class="t" style="left:1748px;top:386.61px;font-size:10.5px;color:#c8c8c8;">ArrayMesh</div>
<div class="t" style="left:1748px;top:410.61px;font-size:10.5px;color:#c8c8c8;">NanoMesh</div>
<div class="t" style="left:1748px;top:434.61px;font-size:10.5px;color:#c8c8c8;">Layers</div>
<div class="t" style="left:1748px;top:458.61px;font-size:10.5px;color:#c8c8c8;">FiberMesh</div>
<div class="t" style="left:1748px;top:482.61px;font-size:10.5px;color:#c8c8c8;">Geometry HD</div>
<div class="t" style="left:1748px;top:506.61px;font-size:10.5px;color:#c8c8c8;">Preview</div>
<div class="t" style="left:1748px;top:530.61px;font-size:10.5px;color:#c8c8c8;">Surface</div>
<div class="t" style="left:1748px;top:554.61px;font-size:10.5px;color:#c8c8c8;">Deformation</div>
<div class="t" style="left:1748px;top:578.61px;font-size:10.5px;color:#c8c8c8;">Masking</div>
<div class="t" style="left:1748px;top:602.61px;font-size:10.5px;color:#c8c8c8;">Visibility</div>
<div class="t" style="left:1748px;top:626.61px;font-size:10.5px;color:#c8c8c8;">Polygroups</div>
<div class="t" style="left:1748px;top:650.61px;font-size:10.5px;color:#c8c8c8;">Contact</div>
<div class="t" style="left:1748px;top:674.61px;font-size:10.5px;color:#c8c8c8;">Morph Target</div>
<div class="t" style="left:1748px;top:698.61px;font-size:10.5px;color:#c8c8c8;">Polypaint</div>
<div class="t" style="left:1748px;top:722.61px;font-size:10.5px;color:#c8c8c8;">UV Map</div>
<div class="t" style="left:1748px;top:746.61px;font-size:10.5px;color:#c8c8c8;">Texture Map</div>
<div class="t" style="left:1748px;top:770.61px;font-size:10.5px;color:#c8c8c8;">Displacement Map</div>
<div class="t" style="left:1748px;top:794.61px;font-size:10.5px;color:#c8c8c8;">Normal Map</div>
<div class="t" style="left:1748px;top:818.61px;font-size:10.5px;color:#c8c8c8;">Vector Displacement Map</div>
<div class="t" style="left:1748px;top:842.61px;font-size:10.5px;color:#c8c8c8;">Display Properties</div>
<div class="t" style="left:1748px;top:866.61px;font-size:10.5px;color:#c8c8c8;">Unified Skin</div>
<div class="t" style="left:1748px;top:890.61px;font-size:10.5px;color:#c8c8c8;">Initialize</div>
<div class="t" style="left:1748px;top:914.61px;font-size:10.5px;color:#c8c8c8;">Import</div>
<div class="t" style="left:1748px;top:938.61px;font-size:10.5px;color:#c8c8c8;">Export</div>
<div class="a" style="left:246px;top:1029.5px;width:34px;height:34px;background:#2a2a2a;border-radius:3px;box-shadow:0 0 0 1px #111"></div>
<div class="t" style="left:95px;top:1052.61px;font-size:10.5px;color:#c0c0c0;width:36px;overflow:hidden;padding-bottom:3px">SelectR</div>
<div class="t" style="left:132px;top:1052.61px;font-size:10.5px;color:#c0c0c0;width:36px;overflow:hidden;padding-bottom:3px">SelectL</div>
<div class="t" style="left:170px;top:1052.61px;font-size:10.5px;color:#c0c0c0;width:36px;overflow:hidden;padding-bottom:3px">MaskPe</div>
<div class="t" style="left:208px;top:1052.61px;font-size:10.5px;color:#c0c0c0;width:36px;overflow:hidden;padding-bottom:3px">MaskLa</div>
<div class="t" style="left:250px;top:1052.61px;font-size:10.5px;color:#c0c0c0;width:36px;overflow:hidden;padding-bottom:3px">Move</div>
<div class="t" style="left:284px;top:1052.61px;font-size:10.5px;color:#c0c0c0;width:36px;overflow:hidden;padding-bottom:3px">Move E</div>
<div class="t" style="left:322px;top:1052.61px;font-size:10.5px;color:#c0c0c0;width:36px;overflow:hidden;padding-bottom:3px">Pinch_3</div>
<div class="t" style="left:360px;top:1052.61px;font-size:10.5px;color:#c0c0c0;width:36px;overflow:hidden;padding-bottom:3px">Inflate_</div>
<div class="t" style="left:398px;top:1052.61px;font-size:10.5px;color:#c0c0c0;width:36px;overflow:hidden;padding-bottom:3px">Detail_</div>
<div class="t" style="left:439px;top:1052.61px;font-size:10.5px;color:#c0c0c0;width:36px;overflow:hidden;padding-bottom:3px">Chisel</div>
<div class="t" style="left:474px;top:1052.61px;font-size:10.5px;color:#c0c0c0;width:36px;overflow:hidden;padding-bottom:3px">ZModel</div>
<div class="t" style="left:512px;top:1052.61px;font-size:10.5px;color:#c0c0c0;width:36px;overflow:hidden;padding-bottom:3px">Cloth_3</div>
<div class="t" style="left:550px;top:1052.61px;font-size:10.5px;color:#c0c0c0;width:36px;overflow:hidden;padding-bottom:3px">Fill_3DC</div>
<div class="t" style="left:588px;top:1052.61px;font-size:10.5px;color:#c0c0c0;width:36px;overflow:hidden;padding-bottom:3px">ClayBui</div>
<div class="t" style="left:628px;top:1052.61px;font-size:10.5px;color:#c0c0c0;width:36px;overflow:hidden;padding-bottom:3px">Polish_</div>
<div class="t" style="left:666px;top:1052.61px;font-size:10.5px;color:#c0c0c0;width:36px;overflow:hidden;padding-bottom:3px">TrimDy</div>
<div class="t" style="left:704px;top:1052.61px;font-size:10.5px;color:#c0c0c0;width:36px;overflow:hidden;padding-bottom:3px">ClipCur</div>
<div class="t" style="left:742px;top:1052.61px;font-size:10.5px;color:#c0c0c0;width:36px;overflow:hidden;padding-bottom:3px">TrimCu</div>
<div class="t" style="left:780px;top:1052.61px;font-size:10.5px;color:#c0c0c0;width:36px;overflow:hidden;padding-bottom:3px">Topolo</div>
<div class="t" style="left:818px;top:1052.61px;font-size:10.5px;color:#c0c0c0;width:36px;overflow:hidden;padding-bottom:3px">IMM_3D</div>
<div class="t" style="left:854px;top:1052.61px;font-size:10.5px;color:#c0c0c0;width:36px;overflow:hidden;padding-bottom:3px">ZReme</div>
<div class="t" style="left:892px;top:1052.61px;font-size:10.5px;color:#c0c0c0;width:36px;overflow:hidden;padding-bottom:3px">ZModel</div>
<div class="t" style="left:930px;top:1052.61px;font-size:10.5px;color:#c0c0c0;width:36px;overflow:hidden;padding-bottom:3px">HardP_</div>
<div class="t" style="left:968px;top:1052.61px;font-size:10.5px;color:#c0c0c0;width:36px;overflow:hidden;padding-bottom:3px">ZReme</div>
<svg class="a" style="left:90px;top:1026px" width="920" height="32" viewBox="90 1026 920 32">
<defs>
<radialGradient id="sph" cx="0.4" cy="0.3" r="0.75"><stop offset="0" stop-color="#e6e6e6"/><stop offset="0.55" stop-color="#a8a8a8"/><stop offset="1" stop-color="#4a4a4a"/></radialGradient>
<radialGradient id="sphd" cx="0.4" cy="0.3" r="0.75"><stop offset="0" stop-color="#9a9a9a"/><stop offset="1" stop-color="#3a3a3a"/></radialGradient>
<linearGradient id="blk" x1="0" y1="0" x2="0" y2="1"><stop offset="0" stop-color="#f0f0f0"/><stop offset="1" stop-color="#b8b8b8"/></linearGradient>
<linearGradient id="cube" x1="0" y1="0" x2="1" y2="1"><stop offset="0" stop-color="#d8d8d8"/><stop offset="1" stop-color="#7a7a7a"/></linearGradient>
</defs>
<rect x="101" y="1032" width="19" height="18" fill="none" stroke="#bbb" stroke-width="1.3" stroke-dasharray="1.6 1.2"/>
<path d="M140 1036 C140 1033 145 1034 149 1035 C152 1036 153 1033 156 1033 C158 1034 158 1038 157 1042 C154 1043 150 1043 149 1047 C147 1051 142 1051 140 1048 C138 1044 140 1040 140 1036Z" fill="none" stroke="#bbb" stroke-width="1.2" stroke-dasharray="1.6 1.2"/>
<rect x="175" y="1030" width="25" height="25" rx="6" fill="url(#blk)"/><path d="M176 1033 C180 1029 188 1031 192 1035 C196 1036 197 1040 193 1041 C191 1044 186 1043 186 1046 C183 1049 180 1046 180 1043 C176 1042 175 1037 176 1033Z" fill="#6e6e6e"/>
<rect x="213" y="1030" width="25" height="25" rx="6" fill="url(#blk)"/><path d="M216 1032 C213 1036 214 1042 220 1046 C222 1050 224 1046 224 1042 C226 1040 222 1038 222 1034 C220 1032 218 1031 216 1032Z" fill="#6e6e6e"/>
<path d="M253 1042 C253 1034 260 1030 268 1030 C274 1030 274 1036 273 1044 C272 1050 267 1054 261 1054 C255 1054 253 1048 253 1042Z" fill="url(#sph)"/>
<path d="M289 1044 C289 1036 298 1031 309 1030 C313 1034 311 1044 306 1051 C302 1055 293 1055 289 1044Z" fill="url(#sph)"/>
<g fill="url(#blk)"><path d="M326 1034 Q339 1039 352 1034 V1054 H326Z"/><path d="M364 1037 Q377 1026 390 1037 V1054 H364Z"/><path d="M402 1034 Q415 1046 428 1034 V1054 H402Z"/><path d="M516 1034 Q529 1042 542 1034 V1054 H516Z"/><path d="M554 1034 Q567 1040 580 1034 V1054 H554Z"/><path d="M632 1034 Q645 1030 658 1034 V1054 H632Z"/></g>
<circle cx="453" cy="1041" r="13" fill="url(#sphd)"/><path d="M446 1034 L460 1048 M459 1034 L447 1047" stroke="#888" stroke-width="1"/>
<circle cx="605" cy="1041" r="12.5" fill="url(#sph)"/><path d="M600 1048 L612 1034" stroke="#ddd" stroke-width="1.5"/>
<circle cx="683" cy="1041" r="12.5" fill="url(#sph)"/>
<circle cx="720" cy="1043" r="11.5" fill="url(#sphd)"/><path d="M718 1030 L732 1036 C730 1042 722 1044 718 1040Z" fill="#eee"/>
<circle cx="758" cy="1043" r="11.5" fill="url(#sphd)"/><path d="M760 1038 L770 1044 M760 1044 L770 1038" stroke="#ddd" stroke-width="1.3"/>
<circle cx="797" cy="1043" r="12" fill="url(#sph)"/>
<g fill="#ddd"><rect x="822" y="1036" width="6" height="7"/><rect x="830" y="1030" width="5" height="13"/><rect x="837" y="1036" width="5" height="7"/><rect x="843" y="1036" width="6" height="7"/><circle cx="825" cy="1048" r="2.5"/><circle cx="832" cy="1048" r="2.5"/><circle cx="839" cy="1048" r="2.5"/><circle cx="846" cy="1048" r="2.5"/></g>
<g fill="url(#cube)"><path d="M478 1035 L490 1030 L503 1035 L503 1050 L490 1055 L478 1050Z"/><path d="M859 1035 L871 1030 L883 1035 L883 1050 L871 1055 L859 1050Z"/><path d="M898 1035 L910 1030 L921 1035 L921 1050 L910 1055 L898 1050Z"/><path d="M973 1035 L985 1030 L997 1035 L997 1050 L985 1055 L973 1050Z"/></g>
<circle cx="947" cy="1041" r="12" fill="#fff"/><path d="M953 1032 L944 1046 C942 1049 939 1049 940 1046" stroke="#111" stroke-width="2.6" fill="none"/>
</svg>
<div class="a" style="left:1005px;top:1029px;width:70px;height:35px;background:#1d1d1d;border-radius:3px"></div>
<div class="t" style="left:1009px;top:1042.11px;font-size:10.5px;color:#c0c0c0;letter-spacing:0.245px;">Topological</div>
<div class="t" style="left:1085px;top:1029.91px;font-size:10.5px;color:#c0c0c0;letter-spacing:-0.518px;">Range&nbsp;&nbsp;5</div>
<div class="a" style="left:1083px;top:1042px;width:68px;height:1px;background:#555;"></div>
<div class="a" style="left:1083px;top:1040px;width:15px;height:6px;background:linear-gradient(#a4ec2e,#5cae00);border-radius:3px"></div>
<div class="t" style="left:1161px;top:1032.11px;font-size:10.5px;color:#c0c0c0;letter-spacing:-0.026px;">BackfaceMask</div>
<div class="t" style="left:1085px;top:1049.11px;font-size:10.5px;color:#c0c0c0;letter-spacing:-0.070px;">Mask By Polygroups&nbsp;&nbsp;0</div>
<div class="a" style="left:1082px;top:1061px;width:146px;height:1px;background:#555;"></div>
<div class="a" style="left:1082px;top:1058px;width:14px;height:6px;background:linear-gradient(#a4ec2e,#5cae00);border-radius:3px"></div>
<svg class="a" style="left:808px;top:1070px" width="132" height="10" viewBox="0 0 132 10"><rect x="2" y="3" width="50" height="5" fill="url(#dp)"/><rect x="79" y="3" width="51" height="5" fill="url(#dp)"/><path d="M54 8 L60 2 L66 8Z M66 2 L72 8 L78 2Z" fill="#555"/></svg>
<svg class="a" style="left:1510px;top:172px" width="70" height="114" viewBox="0 0 70 114">
<path d="M12.7 74 L21 76 L27.5 93 L19 105 L12.5 104 Z" fill="#bdbdbd"/><path d="M57 74 L48.6 76 L42.2 93 L49.6 105 L56 104 Z" fill="#c4c4c4"/>
<path d="M19 105 L27.5 93 L42.2 93 L49.6 105 Z" fill="#dadada"/>
<path d="M16.9 15.8 L25.3 10 L42.2 10 L51.7 18 L52.8 37 L50.7 58 L44.3 74 L40 93 L27.5 93 L21 77 L17 58 L15 37 Z" fill="#6e6e6e" stroke="#1a1a1a" stroke-width="1"/>
<path d="M16.9 15.8 L24.8 11.6 L27.5 30.6 L15.8 31.7 Z" fill="#8c8c8c"/><path d="M42.2 11.6 L51.7 18 L52.8 31.7 L40.7 30.6 Z" fill="#888"/>
<path d="M24.8 11.6 L42.2 11.6 L40.7 30.6 L27.5 30.6 Z" fill="#e2e2e2"/>
<rect x="15.5" y="31.7" width="37.5" height="7.3" fill="#4c4c4c"/>
<path d="M30 35.9 L36.4 35.9 L35.4 48.6 L31.2 48.6 Z" fill="#e6e6e6"/>
<ellipse cx="32.7" cy="51.7" rx="5" ry="2.5" fill="#2e2e2e"/>
<rect x="31" y="53" width="4.5" height="21" fill="#999"/>
<path d="M26.4 74 L40.1 74 L39 77.2 L27.5 77.2 Z" fill="#1e1e1e"/>
<path d="M21 77 L44.3 77 L40 93 L27.5 93 Z" fill="#565656"/>
<path d="M10.5 39 L13.7 38 L14 53 L11 52 Z" fill="#cfcfcf"/><path d="M58 39 L54.8 38 L54.5 53 L57.5 52 Z" fill="#cfcfcf"/>
</svg>
<svg class="a" style="left:1550px;top:150px" width="70" height="70" viewBox="0 0 70 70"><path d="M7 15 L46 8 L46 22Z" fill="#ff1010"/><circle cx="56" cy="16" r="8.5" fill="#0a10ee"/><path d="M48 28 L64 28 L56 64Z" fill="#10e010"/></svg>
<svg class="a" style="left:1060px;top:441px" width="50" height="50" viewBox="0 0 50 50"><circle cx="24.4" cy="24.4" r="19" fill="none" stroke="#b0101e" stroke-width="1.6"/><circle cx="24.4" cy="24.4" r="9" fill="none" stroke="#3a0a10" stroke-width="1"/></svg>
<svg class="a" style="left:314px;top:157px" width="1120" height="830" viewBox="314 157 1120 830">
<defs>
<filter id="b1" x="-20%" y="-20%" width="140%" height="140%"><feGaussianBlur stdDeviation="1"/></filter>
<filter id="b2" x="-20%" y="-20%" width="140%" height="140%"><feGaussianBlur stdDeviation="2"/></filter>
<filter id="b3" x="-30%" y="-30%" width="160%" height="160%"><feGaussianBlur stdDeviation="3"/></filter>
<filter id="b5" x="-30%" y="-30%" width="160%" height="160%"><feGaussianBlur stdDeviation="5"/></filter>
<filter id="b8" x="-50%" y="-50%" width="200%" height="200%"><feGaussianBlur stdDeviation="8"/></filter>
<filter id="b12" x="-50%" y="-50%" width="200%" height="200%"><feGaussianBlur stdDeviation="12"/></filter>
<linearGradient id="hairBot" x1="0" y1="370" x2="0" y2="450" gradientUnits="userSpaceOnUse"><stop offset="0" stop-color="#6a6650" stop-opacity="0"/><stop offset="0.5" stop-color="#6a6650" stop-opacity="0.22"/><stop offset="1" stop-color="#5a5640" stop-opacity="0.55"/></linearGradient>
<clipPath id="hairClip"><path d="M638.9 442.0 C636.8 438.2 630.8 427.2 626.0 419.0 C621.2 410.8 613.9 402.5 610.4 393.0 C606.9 383.5 605.4 373.2 605.0 362.0 C604.6 350.8 606.0 336.0 607.8 325.7 C609.5 315.4 612.6 305.8 615.5 300.0 C618.4 294.2 623.4 292.5 625.0 291.0 L618.0 279.0 L636.0 282.0 C638.6 278.9 646.2 271.8 651.9 263.5 C657.6 255.2 665.2 240.0 670.0 232.4 C674.8 224.8 678.7 220.4 680.4 218.0 C681.7 219.5 686.1 222.9 688.0 227.0 C689.9 231.1 691.1 236.7 692.0 242.8 C692.9 248.9 693.1 260.1 693.3 263.5 C695.9 262.2 702.1 260.0 709.0 255.7 C715.9 251.4 728.0 244.2 734.8 237.6 C741.6 231.0 745.8 222.3 750.0 216.0 C754.2 209.7 757.0 204.0 760.0 200.0 C763.0 196.0 766.7 193.3 768.0 192.0 C770.0 192.3 775.6 192.2 780.0 194.0 C784.4 195.8 791.9 201.5 794.3 203.0 C796.8 201.2 805.0 195.8 809.6 192.0 C814.2 188.2 818.4 183.2 822.0 180.0 C825.6 176.8 829.5 174.2 831.0 173.0 C832.8 174.5 838.3 177.7 842.0 182.0 C845.7 186.3 849.9 192.5 853.0 199.0 C856.1 205.5 858.8 211.8 860.5 221.0 C862.2 230.2 862.5 246.5 863.0 254.0 C863.5 261.5 863.6 264.0 863.7 266.0 C865.6 267.0 871.1 270.3 875.0 272.0 C878.9 273.7 885.0 275.3 887.0 276.0 C890.8 280.8 902.7 293.2 910.0 305.0 C917.3 316.8 926.7 335.3 931.0 346.5 C935.3 357.7 936.5 363.9 936.0 372.0 C935.5 380.1 932.0 387.0 928.0 395.0 C924.0 403.0 917.5 413.5 911.7 420.0 C905.9 426.5 898.6 429.5 893.0 434.0 C887.4 438.5 880.5 444.8 878.0 447.0 C871.3 446.3 858.2 444.0 838.0 443.0 C817.8 442.0 782.0 440.0 757.0 441.0 C732.0 442.0 706.2 448.0 688.0 449.0 C669.8 450.0 656.2 448.2 648.0 447.0 C639.8 445.8 640.4 442.8 638.9 442.0 Z"/></clipPath>
<clipPath id="faceClip"><path id="faceP" d="M645 440 L880 440 L886 470 L891 563 L889 640 L887 683 C880 705 870 730 856 748 C840 770 815 795 792 808 C775 818 765 821 756 821 C745 821 732 816 716 806 C700 795 688 780 678 760 C668 740 656 712 648 682 L643 600 L638 546 L645 452Z"/></clipPath>
<linearGradient id="neckG" x1="0" y1="0" x2="1" y2="0"><stop offset="0" stop-color="#6a5432"/><stop offset="0.12" stop-color="#87704a"/><stop offset="0.5" stop-color="#927a4e"/><stop offset="0.88" stop-color="#8a734c"/><stop offset="1" stop-color="#624c2e"/></linearGradient>
<linearGradient id="colL" x1="0" y1="0" x2="1" y2="0.3"><stop offset="0" stop-color="#2c2d30"/><stop offset="0.55" stop-color="#41454d"/><stop offset="1" stop-color="#313336"/></linearGradient>
<linearGradient id="colR" x1="0" y1="0.3" x2="1" y2="0"><stop offset="0" stop-color="#313336"/><stop offset="0.45" stop-color="#42464e"/><stop offset="1" stop-color="#2c2d30"/></linearGradient>
<radialGradient id="irisG" cx="0.5" cy="0.5" r="0.5"><stop offset="0" stop-color="#000"/><stop offset="0.3" stop-color="#0a0000"/><stop offset="0.5" stop-color="#6a0606"/><stop offset="0.75" stop-color="#a81212"/><stop offset="0.88" stop-color="#800c0c"/><stop offset="1" stop-color="#1a0000"/></radialGradient>
<linearGradient id="earL" x1="0" y1="0" x2="1" y2="0"><stop offset="0" stop-color="#a89070"/><stop offset="1" stop-color="#8a7452"/></linearGradient>
<linearGradient id="earR" x1="1" y1="0" x2="0" y2="0"><stop offset="0" stop-color="#a89070"/><stop offset="1" stop-color="#8a7452"/></linearGradient>
<linearGradient id="sbL" x1="0" y1="0" x2="1" y2="0"><stop offset="0" stop-color="#e0dfc2"/><stop offset="0.5" stop-color="#d8d6b4"/><stop offset="1" stop-color="#8a8662"/></linearGradient>
<linearGradient id="sbR" x1="0" y1="0" x2="1" y2="0"><stop offset="0" stop-color="#d8d6b4"/><stop offset="0.6" stop-color="#d4d2b0"/><stop offset="1" stop-color="#a4a07c"/></linearGradient>
</defs>
<!-- collar back/shirt -->
<path d="M688 850 C680 870 660 895 640 915 C622 935 617 950 622 960 C630 972 634 980 635 992 L901 992 C904 980 912 972 922 962 C928 952 926 940 912 925 C892 905 870 880 848 840 Z" fill="#2c2c2e"/>
<!-- neck -->
<path d="M693 770 L689 900 L733 918 L770 992 L798 918 L853 890 L848 790 C846 780 843 772 838 766 Z" fill="url(#neckG)"/>
<path d="M694 790 C706 815 726 846 744 864 C752 870 764 870 772 864 C792 845 816 812 838 782 L836 768 L694 770Z" fill="#5e4a2a" filter="url(#b1)"/>
<path d="M696 880 C720 900 760 905 800 895 C820 890 840 885 850 880" stroke="#7a6440" stroke-width="6" fill="none" filter="url(#b5)" opacity="0.6"/>
<!-- ears -->
<clipPath id="earLc"><path d="M640 574 C634 566 622 563 613 567 C608 572 608 585 611 605 C615 630 624 655 636 672 C641 680 646 684 650 684 L646 640 Z"/></clipPath>
<clipPath id="earRc"><path d="M886 576 C898 566 914 563 924 568 C933 578 934 600 929 628 C923 656 910 676 890 684 Z"/></clipPath>
<path d="M640 574 C634 566 622 563 613 567 C608 572 608 585 611 605 C615 630 624 655 636 672 C641 680 646 684 650 684 L646 640 Z" fill="#9a8060"/>
<g clip-path="url(#earLc)">
<path d="M611 569 C607 580 608 600 612 620 C617 645 626 665 644 684" stroke="#b09876" stroke-width="6" fill="none" filter="url(#b2)"/>
<path d="M628 580 C624 600 627 630 635 650 C639 660 643 668 647 672" stroke="#6a5436" stroke-width="4" fill="none" filter="url(#b2)"/>
</g>
<path d="M886 576 C898 566 914 563 924 568 C933 578 934 600 929 628 C923 656 910 676 890 684 Z" fill="#9a8060"/>
<g clip-path="url(#earRc)">
<path d="M924 566 C934 580 935 604 930 630 C924 656 912 676 892 686" stroke="#b09876" stroke-width="6" fill="none" filter="url(#b2)"/>
<path d="M911 582 C917 598 915 620 909 640 C905 652 899 662 893 668" stroke="#6a5436" stroke-width="4" fill="none" filter="url(#b2)"/>
</g>
<!-- face -->
<path d="M645 440 L880 440 L886 470 L891 563 L889 640 L887 683 C880 705 870 730 856 748 C840 770 815 795 792 808 C775 818 765 821 756 821 C745 821 732 816 716 806 C700 795 688 780 678 760 C668 740 656 712 648 682 L643 600 L638 546 L645 452Z" fill="#8a7350"/>
<g clip-path="url(#faceClip)">
<ellipse cx="752" cy="505" rx="90" ry="62" fill="#a29277" filter="url(#b12)"/>
<ellipse cx="756" cy="795" rx="40" ry="22" fill="#958058" filter="url(#b8)"/>
<ellipse cx="712" cy="700" rx="18" ry="26" fill="#907a56" filter="url(#b8)"/>
<ellipse cx="812" cy="648" rx="28" ry="24" fill="#968160" filter="url(#b8)"/>
<ellipse cx="848" cy="715" rx="22" ry="38" fill="#7a6642" filter="url(#b8)"/>
<path d="M646 650 C652 700 670 745 700 790 C720 812 740 822 756 822" stroke="#4e3c22" stroke-width="7" fill="none" filter="url(#b3)"/>
<path d="M891 650 C884 700 866 740 830 785 C810 808 775 822 756 822" stroke="#5a4628" stroke-width="6" fill="none" filter="url(#b3)"/>
<ellipse cx="860" cy="700" rx="22" ry="40" fill="#836c48" filter="url(#b8)" opacity="0.6"/>
<ellipse cx="690" cy="650" rx="45" ry="14" fill="#7a6242" filter="url(#b8)" opacity="0.7"/>
</g>
<!-- sideburns -->
<path d="M642 444 C636 446 631 458 629 480 C627 505 628 530 632 562 L640 566 L638 545 C640 520 643 490 648 450 C647 446 645 444 642 444Z" fill="url(#sbL)"/>
<path d="M878 452 C884 446 890 440 894 438 C900 444 906 460 910 480 C913 495 913 510 912 528 C909 555 900 590 894 620 C891 618 890 590 889 580 C887 555 886 540 885 530 C884 515 887 505 885 495 C883 485 888 478 884 460 Z" fill="url(#sbR)"/>
<!-- nose -->
<path d="M740 592 L772 592 C776 625 782 652 790 674 C798 682 798 700 788 708 C778 714 766 716 756 716 C746 716 734 714 724 708 C714 700 714 682 722 674 C730 652 736 625 740 592Z" fill="#8c7552" filter="url(#b1)"/>
<path d="M737 615 C733 640 727 660 719 678" stroke="#776040" stroke-width="5" fill="none" filter="url(#b3)"/>
<path d="M775 615 C779 640 785 660 793 678" stroke="#7a6442" stroke-width="5" fill="none" filter="url(#b3)"/>
<path d="M742 593 L768 593 C769 625 770 655 771 684 L741 684 C741 655 742 625 742 593Z" fill="#a48c6a" filter="url(#b2)"/>
<ellipse cx="756" cy="682" rx="14" ry="6" fill="#a48e6c" filter="url(#b2)"/>
<path d="M719 688 C726 684 740 688 756 690 C772 688 786 684 793 688 C796 698 790 708 778 711 C768 714 762 714 756 716 C750 714 744 714 734 711 C722 708 716 698 719 688Z" fill="#745a3a" filter="url(#b2)"/>
<path d="M726 697 C730 694 740 695 745 700 C741 704 731 704 726 697Z" fill="#806646" filter="url(#b1)"/>
<path d="M786 697 C782 694 772 695 767 700 C771 704 781 704 786 697Z" fill="#806646" filter="url(#b1)"/>
<ellipse cx="756" cy="704" rx="5" ry="7" fill="#7e6646" filter="url(#b2)"/>
<path d="M738 718 C745 726 768 726 775 718 L776 730 L737 730Z" fill="#9e8868" filter="url(#b2)"/>
<!-- lips -->
<path d="M701 742 C720 735 738 731 752 728 C756 729 758 729 760 728 C774 731 792 735 810 742 C790 744 772 745 756 747 C740 745 720 744 701 742Z" fill="#826b47" filter="url(#b1)"/>
<path d="M702 742 C720 741 740 742 752 745 Q756 747 760 745 C772 742 792 741 809 742" stroke="#54402a" stroke-width="2" fill="none" filter="url(#b1)"/>
<path d="M706 745 C718 758 736 766 756 766 C776 766 795 758 806 745 C790 748 772 749 756 750 C740 749 722 748 706 745Z" fill="#97825e" filter="url(#b1)"/>
<ellipse cx="756" cy="755" rx="22" ry="6" fill="#a49070" filter="url(#b3)"/>
<path d="M728 772 C742 778 770 778 786 772" stroke="#6a5434" stroke-width="4" fill="none" filter="url(#b2)"/>
<ellipse cx="756" cy="798" rx="30" ry="18" fill="#98825e" filter="url(#b5)"/>
<!-- eye -->
<path d="M792 614 C798 600 810 590 825 586 C842 585 856 590 865 600 C858 610 848 614 832 616 C818 617 804 617 792 614Z" fill="#dedee4"/>
<clipPath id="eyeClip"><path d="M792 614 C798 600 810 590 825 586 C842 585 856 590 865 600 C858 610 848 614 832 616 C818 617 804 617 792 614Z"/></clipPath>
<g clip-path="url(#eyeClip)"><circle cx="825" cy="602" r="19" fill="url(#irisG)"/><circle cx="825" cy="598" r="6" fill="#000"/><circle cx="831" cy="611" r="1.3" fill="#ccc"/><path d="M788 600 C808 591 848 590 868 600 L868 578 L788 578Z" fill="#140c08" opacity="0.75" filter="url(#b2)"/></g>
<path d="M790 615 C797 600 810 588 826 584 C843 583 858 590 867 600" stroke="#4e3a22" stroke-width="2.6" fill="none"/>
<path d="M794 580 C810 574 850 574 870 592" stroke="#a48c6a" stroke-width="4" fill="none" filter="url(#b2)"/>
<path d="M794 617 C812 620 848 618 866 602" stroke="#9a8462" stroke-width="2.2" fill="none" filter="url(#b1)"/>
<!-- eyebrows -->
<path d="M633 549 C660 543 690 543 700 542 C712 543 724 546 731 550 L733 564 L633 566Z" fill="#d2d0ae"/>
<path d="M779 562 C790 556 815 546 840 542 C846 548 852 553 855 552 C858 549 861 545 864 542 C868 547 872 552 876 555 C880 560 884 566 884 569 C870 566 860 565 850 565 C830 568 805 576 786 583 C781 576 779 568 779 562Z" fill="#d2d0ae"/>
<path d="M786 583 C805 576 830 568 850 565 C862 565 872 567 884 569" stroke="#8a8262" stroke-width="2" fill="none"/>
<!-- eye patch -->
<path d="M623 585 C626 570 636 564 660 560 C690 557 715 557 729 562 C736 570 737 585 734 600 C730 615 722 628 705 636 C690 642 675 643 660 638 C645 633 635 625 628 612 C624 605 622 595 623 585Z" fill="#272622"/>
<path d="M660 560 C690 557 715 557 729 562" stroke="#3a3835" stroke-width="1.5" fill="none"/>
<ellipse cx="630" cy="596" rx="6" ry="10" fill="#1e1d1b" stroke="#45423e" stroke-width="1.2"/>
<path d="M726 560 C760 545 800 528 840 515 C870 510 895 508 912 510 L912 530 C890 530 868 532 842 536 C805 546 770 558 738 572 Z" fill="#2f2e2d"/>
<path d="M740 553 C775 538 810 524 842 516 C870 511 895 510 912 511" stroke="#4a4846" stroke-width="1.2" fill="none"/>
<ellipse cx="732" cy="571" rx="6" ry="10" fill="#1e1d1b" stroke="#45423e" stroke-width="1.2"/>
<!-- hair -->
<path d="M638.9 442.0 C636.8 438.2 630.8 427.2 626.0 419.0 C621.2 410.8 613.9 402.5 610.4 393.0 C606.9 383.5 605.4 373.2 605.0 362.0 C604.6 350.8 606.0 336.0 607.8 325.7 C609.5 315.4 612.6 305.8 615.5 300.0 C618.4 294.2 623.4 292.5 625.0 291.0 L618.0 279.0 L636.0 282.0 C638.6 278.9 646.2 271.8 651.9 263.5 C657.6 255.2 665.2 240.0 670.0 232.4 C674.8 224.8 678.7 220.4 680.4 218.0 C681.7 219.5 686.1 222.9 688.0 227.0 C689.9 231.1 691.1 236.7 692.0 242.8 C692.9 248.9 693.1 260.1 693.3 263.5 C695.9 262.2 702.1 260.0 709.0 255.7 C715.9 251.4 728.0 244.2 734.8 237.6 C741.6 231.0 745.8 222.3 750.0 216.0 C754.2 209.7 757.0 204.0 760.0 200.0 C763.0 196.0 766.7 193.3 768.0 192.0 C770.0 192.3 775.6 192.2 780.0 194.0 C784.4 195.8 791.9 201.5 794.3 203.0 C796.8 201.2 805.0 195.8 809.6 192.0 C814.2 188.2 818.4 183.2 822.0 180.0 C825.6 176.8 829.5 174.2 831.0 173.0 C832.8 174.5 838.3 177.7 842.0 182.0 C845.7 186.3 849.9 192.5 853.0 199.0 C856.1 205.5 858.8 211.8 860.5 221.0 C862.2 230.2 862.5 246.5 863.0 254.0 C863.5 261.5 863.6 264.0 863.7 266.0 C865.6 267.0 871.1 270.3 875.0 272.0 C878.9 273.7 885.0 275.3 887.0 276.0 C890.8 280.8 902.7 293.2 910.0 305.0 C917.3 316.8 926.7 335.3 931.0 346.5 C935.3 357.7 936.5 363.9 936.0 372.0 C935.5 380.1 932.0 387.0 928.0 395.0 C924.0 403.0 917.5 413.5 911.7 420.0 C905.9 426.5 898.6 429.5 893.0 434.0 C887.4 438.5 880.5 444.8 878.0 447.0 C871.3 446.3 858.2 444.0 838.0 443.0 C817.8 442.0 782.0 440.0 757.0 441.0 C732.0 442.0 706.2 448.0 688.0 449.0 C669.8 450.0 656.2 448.2 648.0 447.0 C639.8 445.8 640.4 442.8 638.9 442.0 Z" fill="#d2d3b5"/>
<g clip-path="url(#hairClip)">
<ellipse cx="770" cy="320" rx="130" ry="100" fill="#dadbc1" filter="url(#b12)"/>
<path d="M636.0 284.0 C633.4 290.0 624.1 308.3 620.5 320.0 C616.9 331.7 615.1 342.7 614.5 354.0 C613.9 365.3 614.2 377.4 617.0 388.0 C619.8 398.6 627.0 410.3 631.0 417.5 C635.0 424.7 637.5 426.6 641.0 431.0 C644.5 435.4 650.2 441.8 652.0 444.0 L673.6 444.0 C671.3 439.0 664.9 423.0 660.0 414.0 C655.1 405.0 648.8 398.6 644.5 390.0 C640.2 381.4 636.1 371.5 634.0 362.7 C631.9 353.9 631.1 347.0 631.7 337.0 C632.3 327.0 633.6 316.0 637.7 302.8 C641.8 289.6 653.4 265.5 656.5 258.0 L636.0 284.0 Z" fill="#bab896"/>
<path d="M634.0 284.0 C631.4 290.0 622.1 308.3 618.5 320.0 C614.9 331.7 613.1 342.7 612.5 354.0 C611.9 365.3 612.2 377.4 615.0 388.0 C617.8 398.6 625.0 410.3 629.0 417.5 C633.0 424.7 635.5 426.6 639.0 431.0 C642.5 435.4 648.2 441.8 650.0 444.0 " stroke="#aaa78c" stroke-width="8" fill="none" filter="url(#b3)"/>
<path d="M881.9 277.0 C882.9 280.8 886.3 289.5 888.0 300.0 C889.7 310.5 891.8 328.3 892.0 340.0 C892.2 351.7 891.3 360.8 889.0 370.0 C886.7 379.2 880.9 386.7 878.0 395.0 C875.1 403.3 873.6 411.5 871.7 420.0 C869.8 428.5 867.5 441.7 866.7 446.0 L880.0 446.0 C881.1 443.8 883.5 438.9 886.7 432.5 C889.9 426.1 894.8 415.1 899.0 407.5 C903.2 399.9 908.5 392.9 911.7 386.7 C914.9 380.4 916.5 377.8 918.0 370.0 C919.5 362.2 921.5 350.0 920.5 340.0 C919.5 330.0 916.8 319.5 912.0 310.0 C907.2 300.5 895.3 287.5 892.0 283.0 L881.9 277.0 Z" fill="#b4b096"/>
<path d="M894.0 283.0 C897.3 287.5 909.2 300.5 914.0 310.0 C918.8 319.5 921.5 330.0 922.5 340.0 C923.5 350.0 921.5 362.2 920.0 370.0 C918.5 377.8 916.9 380.4 913.7 386.7 C910.5 392.9 905.2 399.9 901.0 407.5 C896.8 415.1 891.9 426.1 888.7 432.5 C885.5 438.9 883.1 443.8 882.0 446.0 " stroke="#b4b196" stroke-width="6" fill="none" filter="url(#b3)"/>
<path d="M600 290 C598 350 604 410 640 448" stroke="#a29e82" stroke-width="10" fill="none" filter="url(#b3)"/>
<path d="M942 330 C946 370 938 415 905 448" stroke="#a8a488" stroke-width="10" fill="none" filter="url(#b3)"/>
<path d="M699.0 266.0 C695.6 270.7 685.4 285.0 678.6 294.0 C671.8 303.0 662.7 312.0 658.0 320.0 C653.3 328.0 650.9 333.7 650.4 342.0 C649.9 350.3 651.7 360.4 654.7 369.6 C657.7 378.8 663.0 386.8 668.4 397.0 C673.8 407.2 682.9 423.2 687.0 431.0 C691.1 438.8 692.0 441.8 693.0 444.0 " stroke="#c8c6ac" stroke-width="8" fill="none" filter="url(#b3)"/>
<path d="M800.0 203.0 C795.3 210.2 781.3 232.4 772.0 246.0 C762.7 259.6 750.7 271.7 744.0 284.5 C737.3 297.3 734.9 307.8 731.6 322.7 C728.3 337.6 724.9 356.6 724.0 373.6 C723.1 390.6 725.2 412.6 726.5 424.5 C727.8 436.4 730.8 441.6 731.6 445.0 " stroke="#cac8ae" stroke-width="10" fill="none" filter="url(#b3)"/>
<path d="M824.0 175.0 C821.8 177.5 814.4 182.3 811.0 190.0 C807.6 197.7 806.1 210.3 803.6 221.0 C801.1 231.7 796.4 241.3 796.0 254.0 C795.6 266.7 799.7 281.3 801.0 297.0 C802.3 312.7 804.8 334.2 803.6 348.0 C802.4 361.8 797.0 371.3 794.0 380.0 C791.0 388.7 789.3 389.2 785.8 400.0 C782.3 410.8 775.1 437.5 773.0 445.0 " stroke="#c6c4aa" stroke-width="10" fill="none" filter="url(#b3)"/>
<path d="M837.7 200.5 C840.2 206.0 849.6 221.7 853.0 233.6 C856.4 245.5 858.0 256.9 858.0 271.8 C858.0 286.7 855.5 303.7 853.0 322.7 C850.5 341.7 845.3 365.6 842.8 386.0 C840.2 406.4 838.6 435.2 837.7 445.0 " stroke="#cfcdb3" stroke-width="8" fill="none" filter="url(#b3)"/>
<ellipse cx="835" cy="310" rx="18" ry="45" fill="#dfe0c6" filter="url(#b8)"/>
<g stroke="#e6e7d4" stroke-width="1.6" fill="none" opacity="0.9">
<path d="M637.5 284.0 C634.9 290.0 625.6 308.3 622.0 320.0 C618.4 331.7 616.6 342.7 616.0 354.0 C615.4 365.3 615.8 377.4 618.5 388.0 C621.2 398.6 628.5 410.3 632.5 417.5 C636.5 424.7 639.0 426.6 642.5 431.0 C646.0 435.4 651.7 441.8 653.5 444.0 "/><path d="M658.0 258.0 C654.9 265.5 643.3 289.6 639.2 302.8 C635.1 316.0 633.8 327.0 633.2 337.0 C632.6 347.0 633.4 353.9 635.5 362.7 C637.6 371.5 641.7 381.4 646.0 390.0 C650.3 398.6 656.6 405.0 661.5 414.0 C666.4 423.0 672.8 439.0 675.1 444.0 "/><path d="M831.5 175.0 C829.3 177.5 821.9 182.3 818.5 190.0 C815.1 197.7 813.6 210.3 811.1 221.0 C808.6 231.7 803.9 241.3 803.5 254.0 C803.1 266.7 807.2 281.3 808.5 297.0 C809.8 312.7 812.3 334.2 811.1 348.0 C809.9 361.8 804.5 371.3 801.5 380.0 C798.5 388.7 796.8 389.2 793.3 400.0 C789.8 410.8 782.6 437.5 780.5 445.0 "/><path d="M880.4 277.0 C881.4 280.8 884.8 289.5 886.5 300.0 C888.2 310.5 890.3 328.3 890.5 340.0 C890.7 351.7 889.8 360.8 887.5 370.0 C885.2 379.2 879.4 386.7 876.5 395.0 C873.6 403.3 872.1 411.5 870.2 420.0 C868.3 428.5 866.0 441.7 865.2 446.0 "/><path d="M893.5 283.0 C896.8 287.5 908.8 300.5 913.5 310.0 C918.2 319.5 921.0 330.0 922.0 340.0 C923.0 350.0 921.0 362.2 919.5 370.0 C918.0 377.8 916.4 380.4 913.2 386.7 C910.0 392.9 904.7 399.9 900.5 407.5 C896.3 415.1 891.4 426.1 888.2 432.5 C885.0 438.9 882.6 443.8 881.5 446.0 "/>
</g>
<g stroke="#8e8b70" stroke-width="1" fill="none" opacity="0.8">
<path d="M636.0 284.0 C633.4 290.0 624.1 308.3 620.5 320.0 C616.9 331.7 615.1 342.7 614.5 354.0 C613.9 365.3 614.2 377.4 617.0 388.0 C619.8 398.6 627.0 410.3 631.0 417.5 C635.0 424.7 637.5 426.6 641.0 431.0 C644.5 435.4 650.2 441.8 652.0 444.0 "/><path d="M656.5 258.0 C653.4 265.5 641.8 289.6 637.7 302.8 C633.6 316.0 632.3 327.0 631.7 337.0 C631.1 347.0 631.9 353.9 634.0 362.7 C636.1 371.5 640.2 381.4 644.5 390.0 C648.8 398.6 655.1 405.0 660.0 414.0 C664.9 423.0 671.3 439.0 673.6 444.0 "/><path d="M694.0 266.0 C690.6 270.7 680.4 285.0 673.6 294.0 C666.8 303.0 657.7 312.0 653.0 320.0 C648.3 328.0 645.9 333.7 645.4 342.0 C644.9 350.3 646.7 360.4 649.7 369.6 C652.7 378.8 658.0 386.8 663.4 397.0 C668.8 407.2 677.9 423.2 682.0 431.0 C686.1 438.8 687.0 441.8 688.0 444.0 "/><path d="M794.0 203.0 C789.3 210.2 775.3 232.4 766.0 246.0 C756.7 259.6 744.7 271.7 738.0 284.5 C731.3 297.3 728.9 307.8 725.6 322.7 C722.3 337.6 718.9 356.6 718.0 373.6 C717.1 390.6 719.2 412.6 720.5 424.5 C721.8 436.4 724.8 441.6 725.6 445.0 "/><path d="M830.0 175.0 C827.8 177.5 820.4 182.3 817.0 190.0 C813.6 197.7 812.1 210.3 809.6 221.0 C807.1 231.7 802.4 241.3 802.0 254.0 C801.6 266.7 805.7 281.3 807.0 297.0 C808.3 312.7 810.8 334.2 809.6 348.0 C808.4 361.8 803.0 371.3 800.0 380.0 C797.0 388.7 795.3 389.2 791.8 400.0 C788.3 410.8 781.1 437.5 779.0 445.0 "/><path d="M842.7 200.5 C845.2 206.0 854.6 221.7 858.0 233.6 C861.4 245.5 863.0 256.9 863.0 271.8 C863.0 286.7 860.5 303.7 858.0 322.7 C855.5 341.7 850.3 365.6 847.8 386.0 C845.2 406.4 843.6 435.2 842.7 445.0 "/><path d="M881.9 277.0 C882.9 280.8 886.3 289.5 888.0 300.0 C889.7 310.5 891.8 328.3 892.0 340.0 C892.2 351.7 891.3 360.8 889.0 370.0 C886.7 379.2 880.9 386.7 878.0 395.0 C875.1 403.3 873.6 411.5 871.7 420.0 C869.8 428.5 867.5 441.7 866.7 446.0 "/><path d="M892.0 283.0 C895.3 287.5 907.2 300.5 912.0 310.0 C916.8 319.5 919.5 330.0 920.5 340.0 C921.5 350.0 919.5 362.2 918.0 370.0 C916.5 377.8 914.9 380.4 911.7 386.7 C908.5 392.9 903.2 399.9 899.0 407.5 C894.8 415.1 889.9 426.1 886.7 432.5 C883.5 438.9 881.1 443.8 880.0 446.0 "/>
</g>
<rect x="590" y="370" width="360" height="80" fill="url(#hairBot)"/>
<ellipse cx="900" cy="430" rx="35" ry="25" fill="#4a4634" opacity="0.5" filter="url(#b8)"/>
</g>
<!-- forehead shadow under hair -->
<path d="M645 444 C700 440 820 440 882 446" stroke="#6e5c48" stroke-width="3" fill="none" filter="url(#b2)"/>
<!-- collar front lapels -->
<path d="M688 850 C684 870 686 880 687 891 C705 900 720 910 733 918 C740 940 752 970 770 992 L635 992 C634 980 630 972 622 960 C617 950 622 935 640 915 C660 895 680 870 688 850Z" fill="url(#colL)"/>
<path d="M848 840 C852 860 853 875 853 887 C835 900 815 910 798 918 C795 940 785 970 770 992 L901 992 C904 980 912 972 922 962 C928 952 926 940 912 925 C892 905 870 880 848 840Z" fill="url(#colR)"/>
<path d="M733 918 C720 945 705 970 696 992" stroke="#6a707a" stroke-width="1" fill="none"/>
<path d="M798 918 C812 945 828 970 840 992" stroke="#6a707a" stroke-width="1" fill="none"/>
<path d="M687 891 C705 900 720 910 733 918" stroke="#1e1e20" stroke-width="2" fill="none"/>
<path d="M853 887 C835 900 815 910 798 918" stroke="#1e1e20" stroke-width="2" fill="none"/>
</svg>
<div class="a" style="left:314px;top:987px;width:1120px;height:2px;background:#a8a8a8;"></div>
</body></html>
